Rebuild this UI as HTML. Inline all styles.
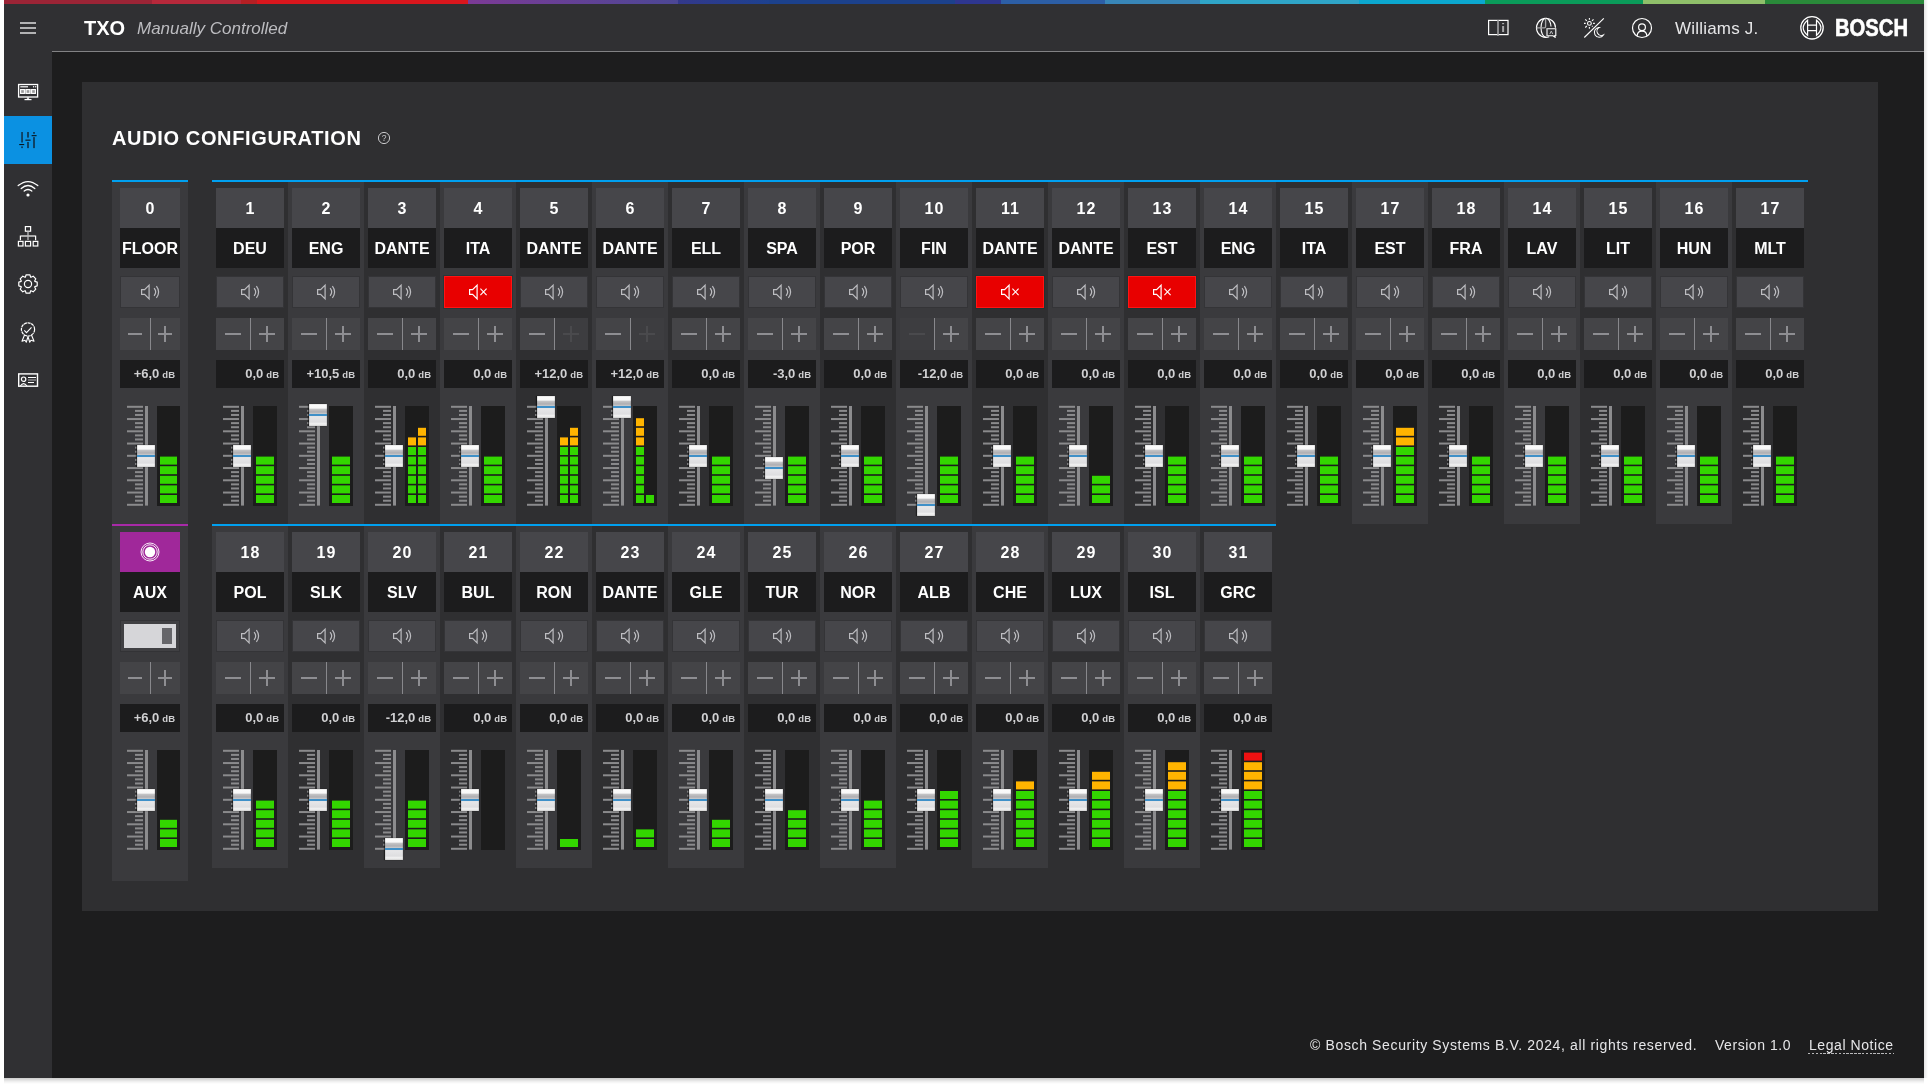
<!DOCTYPE html>
<html><head><meta charset="utf-8"><title>TXO Audio Configuration</title>
<style>
html,body{margin:0;padding:0;}
body{width:1928px;height:1084px;background:#fff;position:relative;overflow:hidden;font-family:"Liberation Sans", sans-serif;}
.app{position:absolute;left:4px;top:0;width:1920px;height:1078px;background:#1d1d1e;}
.abs{position:absolute;}
.num{position:absolute;height:40px;line-height:40px;text-align:center;color:#fff;font-weight:bold;font-size:16px;letter-spacing:1px;text-indent:1px;}
.nm{position:absolute;height:40px;line-height:40px;text-align:center;color:#fff;font-weight:bold;font-size:16px;}
.db{position:absolute;height:28px;line-height:28px;text-align:right;color:#d0d0d2;font-weight:bold;font-size:13px;}
.db span{font-size:9.5px;margin-left:3px;}
.knob{position:absolute;width:18px;height:22px;box-sizing:border-box;
background:linear-gradient(180deg,#dcdcdc 0px,#fbfbfb 1px,#f8f8f8 4px,#c2c2c4 5.5px,#aeaeb2 8px,#c4c4c6 9.5px,#e4e4e6 10px,#e2e2e4 12px,#e6e6e8 13px,#dedee0 18px,#f4f4f4 20px,#cfcfcf 22px);
box-shadow:inset 1px 0 0 rgba(0,0,0,0.08),inset -1px 0 0 rgba(0,0,0,0.08),-1px 0 1px rgba(0,0,0,0.5);}
.knob i{position:absolute;left:0;top:10px;width:18px;height:2px;background:#3f90c8;}
</style></head><body>
<svg width="0" height="0" style="position:absolute"><defs><g id="tk" fill="#8a8a8c"><rect x="0" y="1.800" width="16" height="2"/><rect x="8" y="5.883" width="8" height="2"/><rect x="8" y="9.966" width="8" height="2"/><rect x="0" y="14.049" width="16" height="2"/><rect x="8" y="18.132" width="8" height="2"/><rect x="8" y="22.215" width="8" height="2"/><rect x="0" y="26.298" width="16" height="2"/><rect x="8" y="30.381" width="8" height="2"/><rect x="8" y="34.464" width="8" height="2"/><rect x="0" y="38.547" width="16" height="2"/><rect x="8" y="42.630" width="8" height="2"/><rect x="8" y="46.713" width="8" height="2"/><rect x="0" y="50.796" width="16" height="2"/><rect x="8" y="54.879" width="8" height="2"/><rect x="8" y="58.962" width="8" height="2"/><rect x="0" y="63.045" width="16" height="2"/><rect x="8" y="67.128" width="8" height="2"/><rect x="8" y="71.211" width="8" height="2"/><rect x="0" y="75.294" width="16" height="2"/><rect x="8" y="79.377" width="8" height="2"/><rect x="8" y="83.460" width="8" height="2"/><rect x="0" y="87.543" width="16" height="2"/><rect x="8" y="91.626" width="8" height="2"/><rect x="8" y="95.709" width="8" height="2"/><rect x="0" y="99.792" width="16" height="2"/><rect x="18" y="2" width="3" height="99.6" fill="#8c8c8e"/></g></defs></svg><div class="app"></div><div style="position:absolute;left:1924px;top:0;width:4px;height:1078px;background:linear-gradient(90deg,rgba(0,0,0,0.1),rgba(0,0,0,0))"></div><div style="position:absolute;left:4px;top:1078px;width:1920px;height:6px;background:linear-gradient(180deg,rgba(0,0,0,0.2),rgba(0,0,0,0.06) 60%,rgba(0,0,0,0))"></div>
<div style="position:absolute;left:0;top:0;width:1928px;height:1084px;will-change:transform"><div style="position:absolute;left:4px;top:0px;width:148px;height:4px;background:#9b2436;"></div>
<div style="position:absolute;left:152px;top:0px;width:89px;height:4px;background:#b6283b;"></div>
<div style="position:absolute;left:241px;top:0px;width:16px;height:4px;background:#b41f24;"></div>
<div style="position:absolute;left:257px;top:0px;width:211px;height:4px;background:#d9161d;"></div>
<div style="position:absolute;left:468px;top:0px;width:210px;height:4px;background:linear-gradient(90deg,#7c3a96,#4c4795);"></div>
<div style="position:absolute;left:678px;top:0px;width:91px;height:4px;background:linear-gradient(90deg,#33388a,#1d4190);"></div>
<div style="position:absolute;left:769px;top:0px;width:186px;height:4px;background:#1c418c;"></div>
<div style="position:absolute;left:955px;top:0px;width:46px;height:4px;background:#2e3690;"></div>
<div style="position:absolute;left:1001px;top:0px;width:104px;height:4px;background:#2c5ea6;"></div>
<div style="position:absolute;left:1105px;top:0px;width:95px;height:4px;background:#3886b8;"></div>
<div style="position:absolute;left:1200px;top:0px;width:159px;height:4px;background:#2fa5c8;"></div>
<div style="position:absolute;left:1359px;top:0px;width:126px;height:4px;background:#0ba7cf;"></div>
<div style="position:absolute;left:1485px;top:0px;width:158px;height:4px;background:#0a9b5a;"></div>
<div style="position:absolute;left:1643px;top:0px;width:122px;height:4px;background:#8fbf6a;"></div>
<div style="position:absolute;left:1765px;top:0px;width:159px;height:4px;background:#2a8a3a;"></div>
<div style="position:absolute;left:4px;top:4px;width:1920px;height:48px;background:#303033;"></div>
<div style="position:absolute;left:52px;top:51px;width:1872px;height:1px;background:#828284;"></div>
<div style="position:absolute;left:4px;top:52px;width:48px;height:1026px;background:#303033;"></div>
<div style="position:absolute;left:52px;top:52px;width:1872px;height:1026px;background:#1d1d1e;"></div>
<div style="position:absolute;left:82px;top:82px;width:1796px;height:829px;background:#2f2f31;"></div>
<div style="position:absolute;left:112px;top:180px;width:76px;height:2px;background:#00a0f0;"></div>
<div style="position:absolute;left:212px;top:180px;width:1596px;height:2px;background:#00a0f0;"></div>
<div style="position:absolute;left:112px;top:524px;width:76px;height:2px;background:#a82aa8;"></div>
<div style="position:absolute;left:212px;top:524px;width:1064px;height:2px;background:#00a0f0;"></div>
<div style="position:absolute;left:112px;top:182px;width:76px;height:342px;background:#3a3a3d;"></div>
<div style="position:absolute;left:120px;top:188px;width:60px;height:40px;background:#46464a;"></div>
<div class="num" style="left:120px;top:189px;width:60px">0</div>
<div style="position:absolute;left:120px;top:228px;width:60px;height:40px;background:#1c1c1d;"></div>
<div class="nm" style="left:120px;top:229px;width:60px">FLOOR</div>
<div style="position:absolute;left:120px;top:276px;width:60px;height:32px;background:#46464a;box-sizing:border-box;border:1px solid #343437"></div>
<svg width="24" height="24" viewBox="0 0 24 24" style="position:absolute;left:138px;top:280px"><path d="M3.6 9.6H6.6L11.1 5.1V18.9L6.6 14.4H3.6Z" fill="none" stroke="#bdbdc1" stroke-width="1.2" stroke-linejoin="miter"/><path d="M16.1 8.2Q19.3 12 16.1 15.8" fill="none" stroke="#bdbdc1" stroke-width="1.2"/><path d="M18.4 6.1Q22.8 12 18.4 17.9" fill="none" stroke="#bdbdc1" stroke-width="1.2"/></svg>
<div style="position:absolute;left:120px;top:318px;width:30px;height:32px;background:#444447;"></div>
<div style="position:absolute;left:150px;top:318px;width:30px;height:32px;background:#444447;"></div>
<div style="position:absolute;left:150px;top:318px;width:1px;height:32px;background:#88888c;"></div>
<div style="position:absolute;left:128px;top:333px;width:14px;height:2px;background:#8e8e92;"></div>
<div style="position:absolute;left:158px;top:333px;width:14px;height:2px;background:#8e8e92;"></div>
<div style="position:absolute;left:164px;top:326px;width:2px;height:16px;background:#8e8e92;"></div>
<div style="position:absolute;left:120px;top:360px;width:60px;height:28px;background:#1c1c1d;"></div>
<div class="db" style="left:120px;top:360px;width:55px">+6,0<span>dB</span></div>
<svg width="53" height="104" viewBox="0 0 53 104" style="position:absolute;left:127px;top:404px"><use href="#tk"/><rect x="30" y="2" width="23" height="100" fill="#1c1c1c"/><rect x="33" y="91.00" width="17" height="8" fill="#33d600"/><rect x="33" y="81.40" width="17" height="8" fill="#33d600"/><rect x="33" y="71.80" width="17" height="8" fill="#33d600"/><rect x="33" y="62.20" width="17" height="8" fill="#33d600"/><rect x="33" y="52.60" width="17" height="8" fill="#33d600"/></svg>
<div class="knob" style="left:137px;top:445px"><i></i></div>
<div style="position:absolute;left:216px;top:188px;width:68px;height:40px;background:#46464a;"></div>
<div class="num" style="left:216px;top:189px;width:68px">1</div>
<div style="position:absolute;left:216px;top:228px;width:68px;height:40px;background:#1c1c1d;"></div>
<div class="nm" style="left:216px;top:229px;width:68px">DEU</div>
<div style="position:absolute;left:216px;top:276px;width:68px;height:32px;background:#46464a;box-sizing:border-box;border:1px solid #343437"></div>
<svg width="24" height="24" viewBox="0 0 24 24" style="position:absolute;left:238px;top:280px"><path d="M3.6 9.6H6.6L11.1 5.1V18.9L6.6 14.4H3.6Z" fill="none" stroke="#bdbdc1" stroke-width="1.2" stroke-linejoin="miter"/><path d="M16.1 8.2Q19.3 12 16.1 15.8" fill="none" stroke="#bdbdc1" stroke-width="1.2"/><path d="M18.4 6.1Q22.8 12 18.4 17.9" fill="none" stroke="#bdbdc1" stroke-width="1.2"/></svg>
<div style="position:absolute;left:216px;top:318px;width:34px;height:32px;background:#444447;"></div>
<div style="position:absolute;left:250px;top:318px;width:34px;height:32px;background:#444447;"></div>
<div style="position:absolute;left:250px;top:318px;width:1px;height:32px;background:#88888c;"></div>
<div style="position:absolute;left:225px;top:333px;width:16px;height:2px;background:#8e8e92;"></div>
<div style="position:absolute;left:259px;top:333px;width:16px;height:2px;background:#8e8e92;"></div>
<div style="position:absolute;left:266px;top:326px;width:2px;height:16px;background:#8e8e92;"></div>
<div style="position:absolute;left:216px;top:360px;width:68px;height:28px;background:#1c1c1d;"></div>
<div class="db" style="left:216px;top:360px;width:63px">0,0<span>dB</span></div>
<svg width="54" height="104" viewBox="0 0 54 104" style="position:absolute;left:223px;top:404px"><use href="#tk"/><rect x="30" y="2" width="24" height="100" fill="#1c1c1c"/><rect x="33" y="91.00" width="18" height="8" fill="#33d600"/><rect x="33" y="81.40" width="18" height="8" fill="#33d600"/><rect x="33" y="71.80" width="18" height="8" fill="#33d600"/><rect x="33" y="62.20" width="18" height="8" fill="#33d600"/><rect x="33" y="52.60" width="18" height="8" fill="#33d600"/></svg>
<div class="knob" style="left:233px;top:445px"><i></i></div>
<div style="position:absolute;left:288px;top:182px;width:76px;height:342px;background:#3a3a3d;"></div>
<div style="position:absolute;left:292px;top:188px;width:68px;height:40px;background:#46464a;"></div>
<div class="num" style="left:292px;top:189px;width:68px">2</div>
<div style="position:absolute;left:292px;top:228px;width:68px;height:40px;background:#1c1c1d;"></div>
<div class="nm" style="left:292px;top:229px;width:68px">ENG</div>
<div style="position:absolute;left:292px;top:276px;width:68px;height:32px;background:#46464a;box-sizing:border-box;border:1px solid #343437"></div>
<svg width="24" height="24" viewBox="0 0 24 24" style="position:absolute;left:314px;top:280px"><path d="M3.6 9.6H6.6L11.1 5.1V18.9L6.6 14.4H3.6Z" fill="none" stroke="#bdbdc1" stroke-width="1.2" stroke-linejoin="miter"/><path d="M16.1 8.2Q19.3 12 16.1 15.8" fill="none" stroke="#bdbdc1" stroke-width="1.2"/><path d="M18.4 6.1Q22.8 12 18.4 17.9" fill="none" stroke="#bdbdc1" stroke-width="1.2"/></svg>
<div style="position:absolute;left:292px;top:318px;width:34px;height:32px;background:#444447;"></div>
<div style="position:absolute;left:326px;top:318px;width:34px;height:32px;background:#444447;"></div>
<div style="position:absolute;left:326px;top:318px;width:1px;height:32px;background:#88888c;"></div>
<div style="position:absolute;left:301px;top:333px;width:16px;height:2px;background:#8e8e92;"></div>
<div style="position:absolute;left:335px;top:333px;width:16px;height:2px;background:#8e8e92;"></div>
<div style="position:absolute;left:342px;top:326px;width:2px;height:16px;background:#8e8e92;"></div>
<div style="position:absolute;left:292px;top:360px;width:68px;height:28px;background:#1c1c1d;"></div>
<div class="db" style="left:292px;top:360px;width:63px">+10,5<span>dB</span></div>
<svg width="54" height="104" viewBox="0 0 54 104" style="position:absolute;left:299px;top:404px"><use href="#tk"/><rect x="30" y="2" width="24" height="100" fill="#1c1c1c"/><rect x="33" y="91.00" width="18" height="8" fill="#33d600"/><rect x="33" y="81.40" width="18" height="8" fill="#33d600"/><rect x="33" y="71.80" width="18" height="8" fill="#33d600"/><rect x="33" y="62.20" width="18" height="8" fill="#33d600"/><rect x="33" y="52.60" width="18" height="8" fill="#33d600"/></svg>
<div class="knob" style="left:309px;top:404px"><i></i></div>
<div style="position:absolute;left:368px;top:188px;width:68px;height:40px;background:#46464a;"></div>
<div class="num" style="left:368px;top:189px;width:68px">3</div>
<div style="position:absolute;left:368px;top:228px;width:68px;height:40px;background:#1c1c1d;"></div>
<div class="nm" style="left:368px;top:229px;width:68px">DANTE</div>
<div style="position:absolute;left:368px;top:276px;width:68px;height:32px;background:#46464a;box-sizing:border-box;border:1px solid #343437"></div>
<svg width="24" height="24" viewBox="0 0 24 24" style="position:absolute;left:390px;top:280px"><path d="M3.6 9.6H6.6L11.1 5.1V18.9L6.6 14.4H3.6Z" fill="none" stroke="#bdbdc1" stroke-width="1.2" stroke-linejoin="miter"/><path d="M16.1 8.2Q19.3 12 16.1 15.8" fill="none" stroke="#bdbdc1" stroke-width="1.2"/><path d="M18.4 6.1Q22.8 12 18.4 17.9" fill="none" stroke="#bdbdc1" stroke-width="1.2"/></svg>
<div style="position:absolute;left:368px;top:318px;width:34px;height:32px;background:#444447;"></div>
<div style="position:absolute;left:402px;top:318px;width:34px;height:32px;background:#444447;"></div>
<div style="position:absolute;left:402px;top:318px;width:1px;height:32px;background:#88888c;"></div>
<div style="position:absolute;left:377px;top:333px;width:16px;height:2px;background:#8e8e92;"></div>
<div style="position:absolute;left:411px;top:333px;width:16px;height:2px;background:#8e8e92;"></div>
<div style="position:absolute;left:418px;top:326px;width:2px;height:16px;background:#8e8e92;"></div>
<div style="position:absolute;left:368px;top:360px;width:68px;height:28px;background:#1c1c1d;"></div>
<div class="db" style="left:368px;top:360px;width:63px">0,0<span>dB</span></div>
<svg width="54" height="104" viewBox="0 0 54 104" style="position:absolute;left:375px;top:404px"><use href="#tk"/><rect x="30" y="2" width="24" height="100" fill="#1c1c1c"/><rect x="33" y="91.00" width="8" height="8" fill="#33d600"/><rect x="33" y="81.40" width="8" height="8" fill="#33d600"/><rect x="33" y="71.80" width="8" height="8" fill="#33d600"/><rect x="33" y="62.20" width="8" height="8" fill="#33d600"/><rect x="33" y="52.60" width="8" height="8" fill="#33d600"/><rect x="33" y="43.00" width="8" height="8" fill="#33d600"/><rect x="33" y="33.40" width="8" height="8" fill="#ffb400"/><rect x="43" y="91.00" width="8" height="8" fill="#33d600"/><rect x="43" y="81.40" width="8" height="8" fill="#33d600"/><rect x="43" y="71.80" width="8" height="8" fill="#33d600"/><rect x="43" y="62.20" width="8" height="8" fill="#33d600"/><rect x="43" y="52.60" width="8" height="8" fill="#33d600"/><rect x="43" y="43.00" width="8" height="8" fill="#33d600"/><rect x="43" y="33.40" width="8" height="8" fill="#ffb400"/><rect x="43" y="23.80" width="8" height="8" fill="#ffb400"/></svg>
<div class="knob" style="left:385px;top:445px"><i></i></div>
<div style="position:absolute;left:440px;top:182px;width:76px;height:342px;background:#3a3a3d;"></div>
<div style="position:absolute;left:444px;top:188px;width:68px;height:40px;background:#46464a;"></div>
<div class="num" style="left:444px;top:189px;width:68px">4</div>
<div style="position:absolute;left:444px;top:228px;width:68px;height:40px;background:#1c1c1d;"></div>
<div class="nm" style="left:444px;top:229px;width:68px">ITA</div>
<div style="position:absolute;left:444px;top:276px;width:68px;height:32px;background:#e80000;box-sizing:border-box;border:1px solid #ff1414;box-shadow:0 0 0 1px rgba(20,50,50,0.45)"></div>
<svg width="24" height="24" viewBox="0 0 24 24" style="position:absolute;left:466px;top:280px"><path d="M3.6 9.6H6.6L11.1 5.1V18.9L6.6 14.4H3.6Z" fill="none" stroke="#fff" stroke-width="1.2"/><path d="M14.4 8.7L20.6 15.1M20.6 8.7L14.4 15.1" fill="none" stroke="#fff" stroke-width="1.1"/></svg>
<div style="position:absolute;left:444px;top:318px;width:34px;height:32px;background:#444447;"></div>
<div style="position:absolute;left:478px;top:318px;width:34px;height:32px;background:#444447;"></div>
<div style="position:absolute;left:478px;top:318px;width:1px;height:32px;background:#88888c;"></div>
<div style="position:absolute;left:453px;top:333px;width:16px;height:2px;background:#8e8e92;"></div>
<div style="position:absolute;left:487px;top:333px;width:16px;height:2px;background:#8e8e92;"></div>
<div style="position:absolute;left:494px;top:326px;width:2px;height:16px;background:#8e8e92;"></div>
<div style="position:absolute;left:444px;top:360px;width:68px;height:28px;background:#1c1c1d;"></div>
<div class="db" style="left:444px;top:360px;width:63px">0,0<span>dB</span></div>
<svg width="54" height="104" viewBox="0 0 54 104" style="position:absolute;left:451px;top:404px"><use href="#tk"/><rect x="30" y="2" width="24" height="100" fill="#1c1c1c"/><rect x="33" y="91.00" width="18" height="8" fill="#33d600"/><rect x="33" y="81.40" width="18" height="8" fill="#33d600"/><rect x="33" y="71.80" width="18" height="8" fill="#33d600"/><rect x="33" y="62.20" width="18" height="8" fill="#33d600"/><rect x="33" y="52.60" width="18" height="8" fill="#33d600"/></svg>
<div class="knob" style="left:461px;top:445px"><i></i></div>
<div style="position:absolute;left:520px;top:188px;width:68px;height:40px;background:#46464a;"></div>
<div class="num" style="left:520px;top:189px;width:68px">5</div>
<div style="position:absolute;left:520px;top:228px;width:68px;height:40px;background:#1c1c1d;"></div>
<div class="nm" style="left:520px;top:229px;width:68px">DANTE</div>
<div style="position:absolute;left:520px;top:276px;width:68px;height:32px;background:#46464a;box-sizing:border-box;border:1px solid #343437"></div>
<svg width="24" height="24" viewBox="0 0 24 24" style="position:absolute;left:542px;top:280px"><path d="M3.6 9.6H6.6L11.1 5.1V18.9L6.6 14.4H3.6Z" fill="none" stroke="#bdbdc1" stroke-width="1.2" stroke-linejoin="miter"/><path d="M16.1 8.2Q19.3 12 16.1 15.8" fill="none" stroke="#bdbdc1" stroke-width="1.2"/><path d="M18.4 6.1Q22.8 12 18.4 17.9" fill="none" stroke="#bdbdc1" stroke-width="1.2"/></svg>
<div style="position:absolute;left:520px;top:318px;width:34px;height:32px;background:#444447;"></div>
<div style="position:absolute;left:554px;top:318px;width:34px;height:32px;background:#3d3d40;"></div>
<div style="position:absolute;left:554px;top:318px;width:1px;height:32px;background:#88888c;"></div>
<div style="position:absolute;left:529px;top:333px;width:16px;height:2px;background:#8e8e92;"></div>
<div style="position:absolute;left:563px;top:333px;width:16px;height:2px;background:#4a4a4d;"></div>
<div style="position:absolute;left:570px;top:326px;width:2px;height:16px;background:#4a4a4d;"></div>
<div style="position:absolute;left:520px;top:360px;width:68px;height:28px;background:#1c1c1d;"></div>
<div class="db" style="left:520px;top:360px;width:63px">+12,0<span>dB</span></div>
<svg width="54" height="104" viewBox="0 0 54 104" style="position:absolute;left:527px;top:404px"><use href="#tk"/><rect x="30" y="2" width="24" height="100" fill="#1c1c1c"/><rect x="33" y="91.00" width="8" height="8" fill="#33d600"/><rect x="33" y="81.40" width="8" height="8" fill="#33d600"/><rect x="33" y="71.80" width="8" height="8" fill="#33d600"/><rect x="33" y="62.20" width="8" height="8" fill="#33d600"/><rect x="33" y="52.60" width="8" height="8" fill="#33d600"/><rect x="33" y="43.00" width="8" height="8" fill="#33d600"/><rect x="33" y="33.40" width="8" height="8" fill="#ffb400"/><rect x="43" y="91.00" width="8" height="8" fill="#33d600"/><rect x="43" y="81.40" width="8" height="8" fill="#33d600"/><rect x="43" y="71.80" width="8" height="8" fill="#33d600"/><rect x="43" y="62.20" width="8" height="8" fill="#33d600"/><rect x="43" y="52.60" width="8" height="8" fill="#33d600"/><rect x="43" y="43.00" width="8" height="8" fill="#33d600"/><rect x="43" y="33.40" width="8" height="8" fill="#ffb400"/><rect x="43" y="23.80" width="8" height="8" fill="#ffb400"/></svg>
<div class="knob" style="left:537px;top:396px"><i></i></div>
<div style="position:absolute;left:592px;top:182px;width:76px;height:342px;background:#3a3a3d;"></div>
<div style="position:absolute;left:596px;top:188px;width:68px;height:40px;background:#46464a;"></div>
<div class="num" style="left:596px;top:189px;width:68px">6</div>
<div style="position:absolute;left:596px;top:228px;width:68px;height:40px;background:#1c1c1d;"></div>
<div class="nm" style="left:596px;top:229px;width:68px">DANTE</div>
<div style="position:absolute;left:596px;top:276px;width:68px;height:32px;background:#46464a;box-sizing:border-box;border:1px solid #343437"></div>
<svg width="24" height="24" viewBox="0 0 24 24" style="position:absolute;left:618px;top:280px"><path d="M3.6 9.6H6.6L11.1 5.1V18.9L6.6 14.4H3.6Z" fill="none" stroke="#bdbdc1" stroke-width="1.2" stroke-linejoin="miter"/><path d="M16.1 8.2Q19.3 12 16.1 15.8" fill="none" stroke="#bdbdc1" stroke-width="1.2"/><path d="M18.4 6.1Q22.8 12 18.4 17.9" fill="none" stroke="#bdbdc1" stroke-width="1.2"/></svg>
<div style="position:absolute;left:596px;top:318px;width:34px;height:32px;background:#444447;"></div>
<div style="position:absolute;left:630px;top:318px;width:34px;height:32px;background:#3d3d40;"></div>
<div style="position:absolute;left:630px;top:318px;width:1px;height:32px;background:#88888c;"></div>
<div style="position:absolute;left:605px;top:333px;width:16px;height:2px;background:#8e8e92;"></div>
<div style="position:absolute;left:639px;top:333px;width:16px;height:2px;background:#4a4a4d;"></div>
<div style="position:absolute;left:646px;top:326px;width:2px;height:16px;background:#4a4a4d;"></div>
<div style="position:absolute;left:596px;top:360px;width:68px;height:28px;background:#1c1c1d;"></div>
<div class="db" style="left:596px;top:360px;width:63px">+12,0<span>dB</span></div>
<svg width="54" height="104" viewBox="0 0 54 104" style="position:absolute;left:603px;top:404px"><use href="#tk"/><rect x="30" y="2" width="24" height="100" fill="#1c1c1c"/><rect x="33" y="91.00" width="8" height="8" fill="#33d600"/><rect x="33" y="81.40" width="8" height="8" fill="#33d600"/><rect x="33" y="71.80" width="8" height="8" fill="#33d600"/><rect x="33" y="62.20" width="8" height="8" fill="#33d600"/><rect x="33" y="52.60" width="8" height="8" fill="#33d600"/><rect x="33" y="43.00" width="8" height="8" fill="#33d600"/><rect x="33" y="33.40" width="8" height="8" fill="#ffb400"/><rect x="33" y="23.80" width="8" height="8" fill="#ffb400"/><rect x="33" y="14.20" width="8" height="8" fill="#ffb400"/><rect x="43" y="91.00" width="8" height="8" fill="#33d600"/></svg>
<div class="knob" style="left:613px;top:396px"><i></i></div>
<div style="position:absolute;left:672px;top:188px;width:68px;height:40px;background:#46464a;"></div>
<div class="num" style="left:672px;top:189px;width:68px">7</div>
<div style="position:absolute;left:672px;top:228px;width:68px;height:40px;background:#1c1c1d;"></div>
<div class="nm" style="left:672px;top:229px;width:68px">ELL</div>
<div style="position:absolute;left:672px;top:276px;width:68px;height:32px;background:#46464a;box-sizing:border-box;border:1px solid #343437"></div>
<svg width="24" height="24" viewBox="0 0 24 24" style="position:absolute;left:694px;top:280px"><path d="M3.6 9.6H6.6L11.1 5.1V18.9L6.6 14.4H3.6Z" fill="none" stroke="#bdbdc1" stroke-width="1.2" stroke-linejoin="miter"/><path d="M16.1 8.2Q19.3 12 16.1 15.8" fill="none" stroke="#bdbdc1" stroke-width="1.2"/><path d="M18.4 6.1Q22.8 12 18.4 17.9" fill="none" stroke="#bdbdc1" stroke-width="1.2"/></svg>
<div style="position:absolute;left:672px;top:318px;width:34px;height:32px;background:#444447;"></div>
<div style="position:absolute;left:706px;top:318px;width:34px;height:32px;background:#444447;"></div>
<div style="position:absolute;left:706px;top:318px;width:1px;height:32px;background:#88888c;"></div>
<div style="position:absolute;left:681px;top:333px;width:16px;height:2px;background:#8e8e92;"></div>
<div style="position:absolute;left:715px;top:333px;width:16px;height:2px;background:#8e8e92;"></div>
<div style="position:absolute;left:722px;top:326px;width:2px;height:16px;background:#8e8e92;"></div>
<div style="position:absolute;left:672px;top:360px;width:68px;height:28px;background:#1c1c1d;"></div>
<div class="db" style="left:672px;top:360px;width:63px">0,0<span>dB</span></div>
<svg width="54" height="104" viewBox="0 0 54 104" style="position:absolute;left:679px;top:404px"><use href="#tk"/><rect x="30" y="2" width="24" height="100" fill="#1c1c1c"/><rect x="33" y="91.00" width="18" height="8" fill="#33d600"/><rect x="33" y="81.40" width="18" height="8" fill="#33d600"/><rect x="33" y="71.80" width="18" height="8" fill="#33d600"/><rect x="33" y="62.20" width="18" height="8" fill="#33d600"/><rect x="33" y="52.60" width="18" height="8" fill="#33d600"/></svg>
<div class="knob" style="left:689px;top:445px"><i></i></div>
<div style="position:absolute;left:744px;top:182px;width:76px;height:342px;background:#3a3a3d;"></div>
<div style="position:absolute;left:748px;top:188px;width:68px;height:40px;background:#46464a;"></div>
<div class="num" style="left:748px;top:189px;width:68px">8</div>
<div style="position:absolute;left:748px;top:228px;width:68px;height:40px;background:#1c1c1d;"></div>
<div class="nm" style="left:748px;top:229px;width:68px">SPA</div>
<div style="position:absolute;left:748px;top:276px;width:68px;height:32px;background:#46464a;box-sizing:border-box;border:1px solid #343437"></div>
<svg width="24" height="24" viewBox="0 0 24 24" style="position:absolute;left:770px;top:280px"><path d="M3.6 9.6H6.6L11.1 5.1V18.9L6.6 14.4H3.6Z" fill="none" stroke="#bdbdc1" stroke-width="1.2" stroke-linejoin="miter"/><path d="M16.1 8.2Q19.3 12 16.1 15.8" fill="none" stroke="#bdbdc1" stroke-width="1.2"/><path d="M18.4 6.1Q22.8 12 18.4 17.9" fill="none" stroke="#bdbdc1" stroke-width="1.2"/></svg>
<div style="position:absolute;left:748px;top:318px;width:34px;height:32px;background:#444447;"></div>
<div style="position:absolute;left:782px;top:318px;width:34px;height:32px;background:#444447;"></div>
<div style="position:absolute;left:782px;top:318px;width:1px;height:32px;background:#88888c;"></div>
<div style="position:absolute;left:757px;top:333px;width:16px;height:2px;background:#8e8e92;"></div>
<div style="position:absolute;left:791px;top:333px;width:16px;height:2px;background:#8e8e92;"></div>
<div style="position:absolute;left:798px;top:326px;width:2px;height:16px;background:#8e8e92;"></div>
<div style="position:absolute;left:748px;top:360px;width:68px;height:28px;background:#1c1c1d;"></div>
<div class="db" style="left:748px;top:360px;width:63px">-3,0<span>dB</span></div>
<svg width="54" height="104" viewBox="0 0 54 104" style="position:absolute;left:755px;top:404px"><use href="#tk"/><rect x="30" y="2" width="24" height="100" fill="#1c1c1c"/><rect x="33" y="91.00" width="18" height="8" fill="#33d600"/><rect x="33" y="81.40" width="18" height="8" fill="#33d600"/><rect x="33" y="71.80" width="18" height="8" fill="#33d600"/><rect x="33" y="62.20" width="18" height="8" fill="#33d600"/><rect x="33" y="52.60" width="18" height="8" fill="#33d600"/></svg>
<div class="knob" style="left:765px;top:457px"><i></i></div>
<div style="position:absolute;left:824px;top:188px;width:68px;height:40px;background:#46464a;"></div>
<div class="num" style="left:824px;top:189px;width:68px">9</div>
<div style="position:absolute;left:824px;top:228px;width:68px;height:40px;background:#1c1c1d;"></div>
<div class="nm" style="left:824px;top:229px;width:68px">POR</div>
<div style="position:absolute;left:824px;top:276px;width:68px;height:32px;background:#46464a;box-sizing:border-box;border:1px solid #343437"></div>
<svg width="24" height="24" viewBox="0 0 24 24" style="position:absolute;left:846px;top:280px"><path d="M3.6 9.6H6.6L11.1 5.1V18.9L6.6 14.4H3.6Z" fill="none" stroke="#bdbdc1" stroke-width="1.2" stroke-linejoin="miter"/><path d="M16.1 8.2Q19.3 12 16.1 15.8" fill="none" stroke="#bdbdc1" stroke-width="1.2"/><path d="M18.4 6.1Q22.8 12 18.4 17.9" fill="none" stroke="#bdbdc1" stroke-width="1.2"/></svg>
<div style="position:absolute;left:824px;top:318px;width:34px;height:32px;background:#444447;"></div>
<div style="position:absolute;left:858px;top:318px;width:34px;height:32px;background:#444447;"></div>
<div style="position:absolute;left:858px;top:318px;width:1px;height:32px;background:#88888c;"></div>
<div style="position:absolute;left:833px;top:333px;width:16px;height:2px;background:#8e8e92;"></div>
<div style="position:absolute;left:867px;top:333px;width:16px;height:2px;background:#8e8e92;"></div>
<div style="position:absolute;left:874px;top:326px;width:2px;height:16px;background:#8e8e92;"></div>
<div style="position:absolute;left:824px;top:360px;width:68px;height:28px;background:#1c1c1d;"></div>
<div class="db" style="left:824px;top:360px;width:63px">0,0<span>dB</span></div>
<svg width="54" height="104" viewBox="0 0 54 104" style="position:absolute;left:831px;top:404px"><use href="#tk"/><rect x="30" y="2" width="24" height="100" fill="#1c1c1c"/><rect x="33" y="91.00" width="18" height="8" fill="#33d600"/><rect x="33" y="81.40" width="18" height="8" fill="#33d600"/><rect x="33" y="71.80" width="18" height="8" fill="#33d600"/><rect x="33" y="62.20" width="18" height="8" fill="#33d600"/><rect x="33" y="52.60" width="18" height="8" fill="#33d600"/></svg>
<div class="knob" style="left:841px;top:445px"><i></i></div>
<div style="position:absolute;left:896px;top:182px;width:76px;height:342px;background:#3a3a3d;"></div>
<div style="position:absolute;left:900px;top:188px;width:68px;height:40px;background:#46464a;"></div>
<div class="num" style="left:900px;top:189px;width:68px">10</div>
<div style="position:absolute;left:900px;top:228px;width:68px;height:40px;background:#1c1c1d;"></div>
<div class="nm" style="left:900px;top:229px;width:68px">FIN</div>
<div style="position:absolute;left:900px;top:276px;width:68px;height:32px;background:#46464a;box-sizing:border-box;border:1px solid #343437"></div>
<svg width="24" height="24" viewBox="0 0 24 24" style="position:absolute;left:922px;top:280px"><path d="M3.6 9.6H6.6L11.1 5.1V18.9L6.6 14.4H3.6Z" fill="none" stroke="#bdbdc1" stroke-width="1.2" stroke-linejoin="miter"/><path d="M16.1 8.2Q19.3 12 16.1 15.8" fill="none" stroke="#bdbdc1" stroke-width="1.2"/><path d="M18.4 6.1Q22.8 12 18.4 17.9" fill="none" stroke="#bdbdc1" stroke-width="1.2"/></svg>
<div style="position:absolute;left:900px;top:318px;width:34px;height:32px;background:#3d3d40;"></div>
<div style="position:absolute;left:934px;top:318px;width:34px;height:32px;background:#444447;"></div>
<div style="position:absolute;left:934px;top:318px;width:1px;height:32px;background:#88888c;"></div>
<div style="position:absolute;left:909px;top:333px;width:16px;height:2px;background:#4a4a4d;"></div>
<div style="position:absolute;left:943px;top:333px;width:16px;height:2px;background:#8e8e92;"></div>
<div style="position:absolute;left:950px;top:326px;width:2px;height:16px;background:#8e8e92;"></div>
<div style="position:absolute;left:900px;top:360px;width:68px;height:28px;background:#1c1c1d;"></div>
<div class="db" style="left:900px;top:360px;width:63px">-12,0<span>dB</span></div>
<svg width="54" height="104" viewBox="0 0 54 104" style="position:absolute;left:907px;top:404px"><use href="#tk"/><rect x="30" y="2" width="24" height="100" fill="#1c1c1c"/><rect x="33" y="91.00" width="18" height="8" fill="#33d600"/><rect x="33" y="81.40" width="18" height="8" fill="#33d600"/><rect x="33" y="71.80" width="18" height="8" fill="#33d600"/><rect x="33" y="62.20" width="18" height="8" fill="#33d600"/><rect x="33" y="52.60" width="18" height="8" fill="#33d600"/></svg>
<div class="knob" style="left:917px;top:494px"><i></i></div>
<div style="position:absolute;left:976px;top:188px;width:68px;height:40px;background:#46464a;"></div>
<div class="num" style="left:976px;top:189px;width:68px">11</div>
<div style="position:absolute;left:976px;top:228px;width:68px;height:40px;background:#1c1c1d;"></div>
<div class="nm" style="left:976px;top:229px;width:68px">DANTE</div>
<div style="position:absolute;left:976px;top:276px;width:68px;height:32px;background:#e80000;box-sizing:border-box;border:1px solid #ff1414;box-shadow:0 0 0 1px rgba(20,50,50,0.45)"></div>
<svg width="24" height="24" viewBox="0 0 24 24" style="position:absolute;left:998px;top:280px"><path d="M3.6 9.6H6.6L11.1 5.1V18.9L6.6 14.4H3.6Z" fill="none" stroke="#fff" stroke-width="1.2"/><path d="M14.4 8.7L20.6 15.1M20.6 8.7L14.4 15.1" fill="none" stroke="#fff" stroke-width="1.1"/></svg>
<div style="position:absolute;left:976px;top:318px;width:34px;height:32px;background:#444447;"></div>
<div style="position:absolute;left:1010px;top:318px;width:34px;height:32px;background:#444447;"></div>
<div style="position:absolute;left:1010px;top:318px;width:1px;height:32px;background:#88888c;"></div>
<div style="position:absolute;left:985px;top:333px;width:16px;height:2px;background:#8e8e92;"></div>
<div style="position:absolute;left:1019px;top:333px;width:16px;height:2px;background:#8e8e92;"></div>
<div style="position:absolute;left:1026px;top:326px;width:2px;height:16px;background:#8e8e92;"></div>
<div style="position:absolute;left:976px;top:360px;width:68px;height:28px;background:#1c1c1d;"></div>
<div class="db" style="left:976px;top:360px;width:63px">0,0<span>dB</span></div>
<svg width="54" height="104" viewBox="0 0 54 104" style="position:absolute;left:983px;top:404px"><use href="#tk"/><rect x="30" y="2" width="24" height="100" fill="#1c1c1c"/><rect x="33" y="91.00" width="18" height="8" fill="#33d600"/><rect x="33" y="81.40" width="18" height="8" fill="#33d600"/><rect x="33" y="71.80" width="18" height="8" fill="#33d600"/><rect x="33" y="62.20" width="18" height="8" fill="#33d600"/><rect x="33" y="52.60" width="18" height="8" fill="#33d600"/></svg>
<div class="knob" style="left:993px;top:445px"><i></i></div>
<div style="position:absolute;left:1048px;top:182px;width:76px;height:342px;background:#3a3a3d;"></div>
<div style="position:absolute;left:1052px;top:188px;width:68px;height:40px;background:#46464a;"></div>
<div class="num" style="left:1052px;top:189px;width:68px">12</div>
<div style="position:absolute;left:1052px;top:228px;width:68px;height:40px;background:#1c1c1d;"></div>
<div class="nm" style="left:1052px;top:229px;width:68px">DANTE</div>
<div style="position:absolute;left:1052px;top:276px;width:68px;height:32px;background:#46464a;box-sizing:border-box;border:1px solid #343437"></div>
<svg width="24" height="24" viewBox="0 0 24 24" style="position:absolute;left:1074px;top:280px"><path d="M3.6 9.6H6.6L11.1 5.1V18.9L6.6 14.4H3.6Z" fill="none" stroke="#bdbdc1" stroke-width="1.2" stroke-linejoin="miter"/><path d="M16.1 8.2Q19.3 12 16.1 15.8" fill="none" stroke="#bdbdc1" stroke-width="1.2"/><path d="M18.4 6.1Q22.8 12 18.4 17.9" fill="none" stroke="#bdbdc1" stroke-width="1.2"/></svg>
<div style="position:absolute;left:1052px;top:318px;width:34px;height:32px;background:#444447;"></div>
<div style="position:absolute;left:1086px;top:318px;width:34px;height:32px;background:#444447;"></div>
<div style="position:absolute;left:1086px;top:318px;width:1px;height:32px;background:#88888c;"></div>
<div style="position:absolute;left:1061px;top:333px;width:16px;height:2px;background:#8e8e92;"></div>
<div style="position:absolute;left:1095px;top:333px;width:16px;height:2px;background:#8e8e92;"></div>
<div style="position:absolute;left:1102px;top:326px;width:2px;height:16px;background:#8e8e92;"></div>
<div style="position:absolute;left:1052px;top:360px;width:68px;height:28px;background:#1c1c1d;"></div>
<div class="db" style="left:1052px;top:360px;width:63px">0,0<span>dB</span></div>
<svg width="54" height="104" viewBox="0 0 54 104" style="position:absolute;left:1059px;top:404px"><use href="#tk"/><rect x="30" y="2" width="24" height="100" fill="#1c1c1c"/><rect x="33" y="91.00" width="18" height="8" fill="#33d600"/><rect x="33" y="81.40" width="18" height="8" fill="#33d600"/><rect x="33" y="71.80" width="18" height="8" fill="#33d600"/></svg>
<div class="knob" style="left:1069px;top:445px"><i></i></div>
<div style="position:absolute;left:1128px;top:188px;width:68px;height:40px;background:#46464a;"></div>
<div class="num" style="left:1128px;top:189px;width:68px">13</div>
<div style="position:absolute;left:1128px;top:228px;width:68px;height:40px;background:#1c1c1d;"></div>
<div class="nm" style="left:1128px;top:229px;width:68px">EST</div>
<div style="position:absolute;left:1128px;top:276px;width:68px;height:32px;background:#e80000;box-sizing:border-box;border:1px solid #ff1414;box-shadow:0 0 0 1px rgba(20,50,50,0.45)"></div>
<svg width="24" height="24" viewBox="0 0 24 24" style="position:absolute;left:1150px;top:280px"><path d="M3.6 9.6H6.6L11.1 5.1V18.9L6.6 14.4H3.6Z" fill="none" stroke="#fff" stroke-width="1.2"/><path d="M14.4 8.7L20.6 15.1M20.6 8.7L14.4 15.1" fill="none" stroke="#fff" stroke-width="1.1"/></svg>
<div style="position:absolute;left:1128px;top:318px;width:34px;height:32px;background:#444447;"></div>
<div style="position:absolute;left:1162px;top:318px;width:34px;height:32px;background:#444447;"></div>
<div style="position:absolute;left:1162px;top:318px;width:1px;height:32px;background:#88888c;"></div>
<div style="position:absolute;left:1137px;top:333px;width:16px;height:2px;background:#8e8e92;"></div>
<div style="position:absolute;left:1171px;top:333px;width:16px;height:2px;background:#8e8e92;"></div>
<div style="position:absolute;left:1178px;top:326px;width:2px;height:16px;background:#8e8e92;"></div>
<div style="position:absolute;left:1128px;top:360px;width:68px;height:28px;background:#1c1c1d;"></div>
<div class="db" style="left:1128px;top:360px;width:63px">0,0<span>dB</span></div>
<svg width="54" height="104" viewBox="0 0 54 104" style="position:absolute;left:1135px;top:404px"><use href="#tk"/><rect x="30" y="2" width="24" height="100" fill="#1c1c1c"/><rect x="33" y="91.00" width="18" height="8" fill="#33d600"/><rect x="33" y="81.40" width="18" height="8" fill="#33d600"/><rect x="33" y="71.80" width="18" height="8" fill="#33d600"/><rect x="33" y="62.20" width="18" height="8" fill="#33d600"/><rect x="33" y="52.60" width="18" height="8" fill="#33d600"/></svg>
<div class="knob" style="left:1145px;top:445px"><i></i></div>
<div style="position:absolute;left:1200px;top:182px;width:76px;height:342px;background:#3a3a3d;"></div>
<div style="position:absolute;left:1204px;top:188px;width:68px;height:40px;background:#46464a;"></div>
<div class="num" style="left:1204px;top:189px;width:68px">14</div>
<div style="position:absolute;left:1204px;top:228px;width:68px;height:40px;background:#1c1c1d;"></div>
<div class="nm" style="left:1204px;top:229px;width:68px">ENG</div>
<div style="position:absolute;left:1204px;top:276px;width:68px;height:32px;background:#46464a;box-sizing:border-box;border:1px solid #343437"></div>
<svg width="24" height="24" viewBox="0 0 24 24" style="position:absolute;left:1226px;top:280px"><path d="M3.6 9.6H6.6L11.1 5.1V18.9L6.6 14.4H3.6Z" fill="none" stroke="#bdbdc1" stroke-width="1.2" stroke-linejoin="miter"/><path d="M16.1 8.2Q19.3 12 16.1 15.8" fill="none" stroke="#bdbdc1" stroke-width="1.2"/><path d="M18.4 6.1Q22.8 12 18.4 17.9" fill="none" stroke="#bdbdc1" stroke-width="1.2"/></svg>
<div style="position:absolute;left:1204px;top:318px;width:34px;height:32px;background:#444447;"></div>
<div style="position:absolute;left:1238px;top:318px;width:34px;height:32px;background:#444447;"></div>
<div style="position:absolute;left:1238px;top:318px;width:1px;height:32px;background:#88888c;"></div>
<div style="position:absolute;left:1213px;top:333px;width:16px;height:2px;background:#8e8e92;"></div>
<div style="position:absolute;left:1247px;top:333px;width:16px;height:2px;background:#8e8e92;"></div>
<div style="position:absolute;left:1254px;top:326px;width:2px;height:16px;background:#8e8e92;"></div>
<div style="position:absolute;left:1204px;top:360px;width:68px;height:28px;background:#1c1c1d;"></div>
<div class="db" style="left:1204px;top:360px;width:63px">0,0<span>dB</span></div>
<svg width="54" height="104" viewBox="0 0 54 104" style="position:absolute;left:1211px;top:404px"><use href="#tk"/><rect x="30" y="2" width="24" height="100" fill="#1c1c1c"/><rect x="33" y="91.00" width="18" height="8" fill="#33d600"/><rect x="33" y="81.40" width="18" height="8" fill="#33d600"/><rect x="33" y="71.80" width="18" height="8" fill="#33d600"/><rect x="33" y="62.20" width="18" height="8" fill="#33d600"/><rect x="33" y="52.60" width="18" height="8" fill="#33d600"/></svg>
<div class="knob" style="left:1221px;top:445px"><i></i></div>
<div style="position:absolute;left:1280px;top:188px;width:68px;height:40px;background:#46464a;"></div>
<div class="num" style="left:1280px;top:189px;width:68px">15</div>
<div style="position:absolute;left:1280px;top:228px;width:68px;height:40px;background:#1c1c1d;"></div>
<div class="nm" style="left:1280px;top:229px;width:68px">ITA</div>
<div style="position:absolute;left:1280px;top:276px;width:68px;height:32px;background:#46464a;box-sizing:border-box;border:1px solid #343437"></div>
<svg width="24" height="24" viewBox="0 0 24 24" style="position:absolute;left:1302px;top:280px"><path d="M3.6 9.6H6.6L11.1 5.1V18.9L6.6 14.4H3.6Z" fill="none" stroke="#bdbdc1" stroke-width="1.2" stroke-linejoin="miter"/><path d="M16.1 8.2Q19.3 12 16.1 15.8" fill="none" stroke="#bdbdc1" stroke-width="1.2"/><path d="M18.4 6.1Q22.8 12 18.4 17.9" fill="none" stroke="#bdbdc1" stroke-width="1.2"/></svg>
<div style="position:absolute;left:1280px;top:318px;width:34px;height:32px;background:#444447;"></div>
<div style="position:absolute;left:1314px;top:318px;width:34px;height:32px;background:#444447;"></div>
<div style="position:absolute;left:1314px;top:318px;width:1px;height:32px;background:#88888c;"></div>
<div style="position:absolute;left:1289px;top:333px;width:16px;height:2px;background:#8e8e92;"></div>
<div style="position:absolute;left:1323px;top:333px;width:16px;height:2px;background:#8e8e92;"></div>
<div style="position:absolute;left:1330px;top:326px;width:2px;height:16px;background:#8e8e92;"></div>
<div style="position:absolute;left:1280px;top:360px;width:68px;height:28px;background:#1c1c1d;"></div>
<div class="db" style="left:1280px;top:360px;width:63px">0,0<span>dB</span></div>
<svg width="54" height="104" viewBox="0 0 54 104" style="position:absolute;left:1287px;top:404px"><use href="#tk"/><rect x="30" y="2" width="24" height="100" fill="#1c1c1c"/><rect x="33" y="91.00" width="18" height="8" fill="#33d600"/><rect x="33" y="81.40" width="18" height="8" fill="#33d600"/><rect x="33" y="71.80" width="18" height="8" fill="#33d600"/><rect x="33" y="62.20" width="18" height="8" fill="#33d600"/><rect x="33" y="52.60" width="18" height="8" fill="#33d600"/></svg>
<div class="knob" style="left:1297px;top:445px"><i></i></div>
<div style="position:absolute;left:1352px;top:182px;width:76px;height:342px;background:#3a3a3d;"></div>
<div style="position:absolute;left:1356px;top:188px;width:68px;height:40px;background:#46464a;"></div>
<div class="num" style="left:1356px;top:189px;width:68px">17</div>
<div style="position:absolute;left:1356px;top:228px;width:68px;height:40px;background:#1c1c1d;"></div>
<div class="nm" style="left:1356px;top:229px;width:68px">EST</div>
<div style="position:absolute;left:1356px;top:276px;width:68px;height:32px;background:#46464a;box-sizing:border-box;border:1px solid #343437"></div>
<svg width="24" height="24" viewBox="0 0 24 24" style="position:absolute;left:1378px;top:280px"><path d="M3.6 9.6H6.6L11.1 5.1V18.9L6.6 14.4H3.6Z" fill="none" stroke="#bdbdc1" stroke-width="1.2" stroke-linejoin="miter"/><path d="M16.1 8.2Q19.3 12 16.1 15.8" fill="none" stroke="#bdbdc1" stroke-width="1.2"/><path d="M18.4 6.1Q22.8 12 18.4 17.9" fill="none" stroke="#bdbdc1" stroke-width="1.2"/></svg>
<div style="position:absolute;left:1356px;top:318px;width:34px;height:32px;background:#444447;"></div>
<div style="position:absolute;left:1390px;top:318px;width:34px;height:32px;background:#444447;"></div>
<div style="position:absolute;left:1390px;top:318px;width:1px;height:32px;background:#88888c;"></div>
<div style="position:absolute;left:1365px;top:333px;width:16px;height:2px;background:#8e8e92;"></div>
<div style="position:absolute;left:1399px;top:333px;width:16px;height:2px;background:#8e8e92;"></div>
<div style="position:absolute;left:1406px;top:326px;width:2px;height:16px;background:#8e8e92;"></div>
<div style="position:absolute;left:1356px;top:360px;width:68px;height:28px;background:#1c1c1d;"></div>
<div class="db" style="left:1356px;top:360px;width:63px">0,0<span>dB</span></div>
<svg width="54" height="104" viewBox="0 0 54 104" style="position:absolute;left:1363px;top:404px"><use href="#tk"/><rect x="30" y="2" width="24" height="100" fill="#1c1c1c"/><rect x="33" y="91.00" width="18" height="8" fill="#33d600"/><rect x="33" y="81.40" width="18" height="8" fill="#33d600"/><rect x="33" y="71.80" width="18" height="8" fill="#33d600"/><rect x="33" y="62.20" width="18" height="8" fill="#33d600"/><rect x="33" y="52.60" width="18" height="8" fill="#33d600"/><rect x="33" y="43.00" width="18" height="8" fill="#33d600"/><rect x="33" y="33.40" width="18" height="8" fill="#ffb400"/><rect x="33" y="23.80" width="18" height="8" fill="#ffb400"/></svg>
<div class="knob" style="left:1373px;top:445px"><i></i></div>
<div style="position:absolute;left:1432px;top:188px;width:68px;height:40px;background:#46464a;"></div>
<div class="num" style="left:1432px;top:189px;width:68px">18</div>
<div style="position:absolute;left:1432px;top:228px;width:68px;height:40px;background:#1c1c1d;"></div>
<div class="nm" style="left:1432px;top:229px;width:68px">FRA</div>
<div style="position:absolute;left:1432px;top:276px;width:68px;height:32px;background:#46464a;box-sizing:border-box;border:1px solid #343437"></div>
<svg width="24" height="24" viewBox="0 0 24 24" style="position:absolute;left:1454px;top:280px"><path d="M3.6 9.6H6.6L11.1 5.1V18.9L6.6 14.4H3.6Z" fill="none" stroke="#bdbdc1" stroke-width="1.2" stroke-linejoin="miter"/><path d="M16.1 8.2Q19.3 12 16.1 15.8" fill="none" stroke="#bdbdc1" stroke-width="1.2"/><path d="M18.4 6.1Q22.8 12 18.4 17.9" fill="none" stroke="#bdbdc1" stroke-width="1.2"/></svg>
<div style="position:absolute;left:1432px;top:318px;width:34px;height:32px;background:#444447;"></div>
<div style="position:absolute;left:1466px;top:318px;width:34px;height:32px;background:#444447;"></div>
<div style="position:absolute;left:1466px;top:318px;width:1px;height:32px;background:#88888c;"></div>
<div style="position:absolute;left:1441px;top:333px;width:16px;height:2px;background:#8e8e92;"></div>
<div style="position:absolute;left:1475px;top:333px;width:16px;height:2px;background:#8e8e92;"></div>
<div style="position:absolute;left:1482px;top:326px;width:2px;height:16px;background:#8e8e92;"></div>
<div style="position:absolute;left:1432px;top:360px;width:68px;height:28px;background:#1c1c1d;"></div>
<div class="db" style="left:1432px;top:360px;width:63px">0,0<span>dB</span></div>
<svg width="54" height="104" viewBox="0 0 54 104" style="position:absolute;left:1439px;top:404px"><use href="#tk"/><rect x="30" y="2" width="24" height="100" fill="#1c1c1c"/><rect x="33" y="91.00" width="18" height="8" fill="#33d600"/><rect x="33" y="81.40" width="18" height="8" fill="#33d600"/><rect x="33" y="71.80" width="18" height="8" fill="#33d600"/><rect x="33" y="62.20" width="18" height="8" fill="#33d600"/><rect x="33" y="52.60" width="18" height="8" fill="#33d600"/></svg>
<div class="knob" style="left:1449px;top:445px"><i></i></div>
<div style="position:absolute;left:1504px;top:182px;width:76px;height:342px;background:#3a3a3d;"></div>
<div style="position:absolute;left:1508px;top:188px;width:68px;height:40px;background:#46464a;"></div>
<div class="num" style="left:1508px;top:189px;width:68px">14</div>
<div style="position:absolute;left:1508px;top:228px;width:68px;height:40px;background:#1c1c1d;"></div>
<div class="nm" style="left:1508px;top:229px;width:68px">LAV</div>
<div style="position:absolute;left:1508px;top:276px;width:68px;height:32px;background:#46464a;box-sizing:border-box;border:1px solid #343437"></div>
<svg width="24" height="24" viewBox="0 0 24 24" style="position:absolute;left:1530px;top:280px"><path d="M3.6 9.6H6.6L11.1 5.1V18.9L6.6 14.4H3.6Z" fill="none" stroke="#bdbdc1" stroke-width="1.2" stroke-linejoin="miter"/><path d="M16.1 8.2Q19.3 12 16.1 15.8" fill="none" stroke="#bdbdc1" stroke-width="1.2"/><path d="M18.4 6.1Q22.8 12 18.4 17.9" fill="none" stroke="#bdbdc1" stroke-width="1.2"/></svg>
<div style="position:absolute;left:1508px;top:318px;width:34px;height:32px;background:#444447;"></div>
<div style="position:absolute;left:1542px;top:318px;width:34px;height:32px;background:#444447;"></div>
<div style="position:absolute;left:1542px;top:318px;width:1px;height:32px;background:#88888c;"></div>
<div style="position:absolute;left:1517px;top:333px;width:16px;height:2px;background:#8e8e92;"></div>
<div style="position:absolute;left:1551px;top:333px;width:16px;height:2px;background:#8e8e92;"></div>
<div style="position:absolute;left:1558px;top:326px;width:2px;height:16px;background:#8e8e92;"></div>
<div style="position:absolute;left:1508px;top:360px;width:68px;height:28px;background:#1c1c1d;"></div>
<div class="db" style="left:1508px;top:360px;width:63px">0,0<span>dB</span></div>
<svg width="54" height="104" viewBox="0 0 54 104" style="position:absolute;left:1515px;top:404px"><use href="#tk"/><rect x="30" y="2" width="24" height="100" fill="#1c1c1c"/><rect x="33" y="91.00" width="18" height="8" fill="#33d600"/><rect x="33" y="81.40" width="18" height="8" fill="#33d600"/><rect x="33" y="71.80" width="18" height="8" fill="#33d600"/><rect x="33" y="62.20" width="18" height="8" fill="#33d600"/><rect x="33" y="52.60" width="18" height="8" fill="#33d600"/></svg>
<div class="knob" style="left:1525px;top:445px"><i></i></div>
<div style="position:absolute;left:1584px;top:188px;width:68px;height:40px;background:#46464a;"></div>
<div class="num" style="left:1584px;top:189px;width:68px">15</div>
<div style="position:absolute;left:1584px;top:228px;width:68px;height:40px;background:#1c1c1d;"></div>
<div class="nm" style="left:1584px;top:229px;width:68px">LIT</div>
<div style="position:absolute;left:1584px;top:276px;width:68px;height:32px;background:#46464a;box-sizing:border-box;border:1px solid #343437"></div>
<svg width="24" height="24" viewBox="0 0 24 24" style="position:absolute;left:1606px;top:280px"><path d="M3.6 9.6H6.6L11.1 5.1V18.9L6.6 14.4H3.6Z" fill="none" stroke="#bdbdc1" stroke-width="1.2" stroke-linejoin="miter"/><path d="M16.1 8.2Q19.3 12 16.1 15.8" fill="none" stroke="#bdbdc1" stroke-width="1.2"/><path d="M18.4 6.1Q22.8 12 18.4 17.9" fill="none" stroke="#bdbdc1" stroke-width="1.2"/></svg>
<div style="position:absolute;left:1584px;top:318px;width:34px;height:32px;background:#444447;"></div>
<div style="position:absolute;left:1618px;top:318px;width:34px;height:32px;background:#444447;"></div>
<div style="position:absolute;left:1618px;top:318px;width:1px;height:32px;background:#88888c;"></div>
<div style="position:absolute;left:1593px;top:333px;width:16px;height:2px;background:#8e8e92;"></div>
<div style="position:absolute;left:1627px;top:333px;width:16px;height:2px;background:#8e8e92;"></div>
<div style="position:absolute;left:1634px;top:326px;width:2px;height:16px;background:#8e8e92;"></div>
<div style="position:absolute;left:1584px;top:360px;width:68px;height:28px;background:#1c1c1d;"></div>
<div class="db" style="left:1584px;top:360px;width:63px">0,0<span>dB</span></div>
<svg width="54" height="104" viewBox="0 0 54 104" style="position:absolute;left:1591px;top:404px"><use href="#tk"/><rect x="30" y="2" width="24" height="100" fill="#1c1c1c"/><rect x="33" y="91.00" width="18" height="8" fill="#33d600"/><rect x="33" y="81.40" width="18" height="8" fill="#33d600"/><rect x="33" y="71.80" width="18" height="8" fill="#33d600"/><rect x="33" y="62.20" width="18" height="8" fill="#33d600"/><rect x="33" y="52.60" width="18" height="8" fill="#33d600"/></svg>
<div class="knob" style="left:1601px;top:445px"><i></i></div>
<div style="position:absolute;left:1656px;top:182px;width:76px;height:342px;background:#3a3a3d;"></div>
<div style="position:absolute;left:1660px;top:188px;width:68px;height:40px;background:#46464a;"></div>
<div class="num" style="left:1660px;top:189px;width:68px">16</div>
<div style="position:absolute;left:1660px;top:228px;width:68px;height:40px;background:#1c1c1d;"></div>
<div class="nm" style="left:1660px;top:229px;width:68px">HUN</div>
<div style="position:absolute;left:1660px;top:276px;width:68px;height:32px;background:#46464a;box-sizing:border-box;border:1px solid #343437"></div>
<svg width="24" height="24" viewBox="0 0 24 24" style="position:absolute;left:1682px;top:280px"><path d="M3.6 9.6H6.6L11.1 5.1V18.9L6.6 14.4H3.6Z" fill="none" stroke="#bdbdc1" stroke-width="1.2" stroke-linejoin="miter"/><path d="M16.1 8.2Q19.3 12 16.1 15.8" fill="none" stroke="#bdbdc1" stroke-width="1.2"/><path d="M18.4 6.1Q22.8 12 18.4 17.9" fill="none" stroke="#bdbdc1" stroke-width="1.2"/></svg>
<div style="position:absolute;left:1660px;top:318px;width:34px;height:32px;background:#444447;"></div>
<div style="position:absolute;left:1694px;top:318px;width:34px;height:32px;background:#444447;"></div>
<div style="position:absolute;left:1694px;top:318px;width:1px;height:32px;background:#88888c;"></div>
<div style="position:absolute;left:1669px;top:333px;width:16px;height:2px;background:#8e8e92;"></div>
<div style="position:absolute;left:1703px;top:333px;width:16px;height:2px;background:#8e8e92;"></div>
<div style="position:absolute;left:1710px;top:326px;width:2px;height:16px;background:#8e8e92;"></div>
<div style="position:absolute;left:1660px;top:360px;width:68px;height:28px;background:#1c1c1d;"></div>
<div class="db" style="left:1660px;top:360px;width:63px">0,0<span>dB</span></div>
<svg width="54" height="104" viewBox="0 0 54 104" style="position:absolute;left:1667px;top:404px"><use href="#tk"/><rect x="30" y="2" width="24" height="100" fill="#1c1c1c"/><rect x="33" y="91.00" width="18" height="8" fill="#33d600"/><rect x="33" y="81.40" width="18" height="8" fill="#33d600"/><rect x="33" y="71.80" width="18" height="8" fill="#33d600"/><rect x="33" y="62.20" width="18" height="8" fill="#33d600"/><rect x="33" y="52.60" width="18" height="8" fill="#33d600"/></svg>
<div class="knob" style="left:1677px;top:445px"><i></i></div>
<div style="position:absolute;left:1736px;top:188px;width:68px;height:40px;background:#46464a;"></div>
<div class="num" style="left:1736px;top:189px;width:68px">17</div>
<div style="position:absolute;left:1736px;top:228px;width:68px;height:40px;background:#1c1c1d;"></div>
<div class="nm" style="left:1736px;top:229px;width:68px">MLT</div>
<div style="position:absolute;left:1736px;top:276px;width:68px;height:32px;background:#46464a;box-sizing:border-box;border:1px solid #343437"></div>
<svg width="24" height="24" viewBox="0 0 24 24" style="position:absolute;left:1758px;top:280px"><path d="M3.6 9.6H6.6L11.1 5.1V18.9L6.6 14.4H3.6Z" fill="none" stroke="#bdbdc1" stroke-width="1.2" stroke-linejoin="miter"/><path d="M16.1 8.2Q19.3 12 16.1 15.8" fill="none" stroke="#bdbdc1" stroke-width="1.2"/><path d="M18.4 6.1Q22.8 12 18.4 17.9" fill="none" stroke="#bdbdc1" stroke-width="1.2"/></svg>
<div style="position:absolute;left:1736px;top:318px;width:34px;height:32px;background:#444447;"></div>
<div style="position:absolute;left:1770px;top:318px;width:34px;height:32px;background:#444447;"></div>
<div style="position:absolute;left:1770px;top:318px;width:1px;height:32px;background:#88888c;"></div>
<div style="position:absolute;left:1745px;top:333px;width:16px;height:2px;background:#8e8e92;"></div>
<div style="position:absolute;left:1779px;top:333px;width:16px;height:2px;background:#8e8e92;"></div>
<div style="position:absolute;left:1786px;top:326px;width:2px;height:16px;background:#8e8e92;"></div>
<div style="position:absolute;left:1736px;top:360px;width:68px;height:28px;background:#1c1c1d;"></div>
<div class="db" style="left:1736px;top:360px;width:63px">0,0<span>dB</span></div>
<svg width="54" height="104" viewBox="0 0 54 104" style="position:absolute;left:1743px;top:404px"><use href="#tk"/><rect x="30" y="2" width="24" height="100" fill="#1c1c1c"/><rect x="33" y="91.00" width="18" height="8" fill="#33d600"/><rect x="33" y="81.40" width="18" height="8" fill="#33d600"/><rect x="33" y="71.80" width="18" height="8" fill="#33d600"/><rect x="33" y="62.20" width="18" height="8" fill="#33d600"/><rect x="33" y="52.60" width="18" height="8" fill="#33d600"/></svg>
<div class="knob" style="left:1753px;top:445px"><i></i></div>
<div style="position:absolute;left:112px;top:526px;width:76px;height:355px;background:#3a3a3d;"></div>
<div style="position:absolute;left:120px;top:532px;width:60px;height:40px;background:#a0289a;"></div>
<svg width="22" height="22" viewBox="0 0 22 22" style="position:absolute;left:139px;top:541px"><circle cx="11" cy="11" r="9" fill="none" stroke="#fff" stroke-width="0.9"/><circle cx="11" cy="11" r="7.2" fill="none" stroke="#fff" stroke-width="0.9"/><circle cx="11" cy="11" r="5.2" fill="#fff"/></svg>
<div style="position:absolute;left:120px;top:572px;width:60px;height:40px;background:#1c1c1d;"></div>
<div class="nm" style="left:120px;top:573px;width:60px">AUX</div>
<div style="position:absolute;left:120px;top:620px;width:60px;height:32px;background:#404043;box-sizing:border-box;border:1px solid #333336"></div>
<div style="position:absolute;left:124px;top:624px;width:52px;height:24px;background:#d6d6d9;"></div>
<div style="position:absolute;left:162px;top:628px;width:10px;height:16px;background:#66666a;"></div>
<div style="position:absolute;left:120px;top:662px;width:30px;height:32px;background:#444447;"></div>
<div style="position:absolute;left:150px;top:662px;width:30px;height:32px;background:#444447;"></div>
<div style="position:absolute;left:150px;top:662px;width:1px;height:32px;background:#88888c;"></div>
<div style="position:absolute;left:128px;top:677px;width:14px;height:2px;background:#8e8e92;"></div>
<div style="position:absolute;left:158px;top:677px;width:14px;height:2px;background:#8e8e92;"></div>
<div style="position:absolute;left:164px;top:670px;width:2px;height:16px;background:#8e8e92;"></div>
<div style="position:absolute;left:120px;top:704px;width:60px;height:28px;background:#1c1c1d;"></div>
<div class="db" style="left:120px;top:704px;width:55px">+6,0<span>dB</span></div>
<svg width="53" height="104" viewBox="0 0 53 104" style="position:absolute;left:127px;top:748px"><use href="#tk"/><rect x="30" y="2" width="23" height="100" fill="#1c1c1c"/><rect x="33" y="91.00" width="17" height="8" fill="#33d600"/><rect x="33" y="81.40" width="17" height="8" fill="#33d600"/><rect x="33" y="71.80" width="17" height="8" fill="#33d600"/></svg>
<div class="knob" style="left:137px;top:789px"><i></i></div>
<div style="position:absolute;left:212px;top:526px;width:76px;height:342px;background:#3a3a3d;"></div>
<div style="position:absolute;left:216px;top:532px;width:68px;height:40px;background:#46464a;"></div>
<div class="num" style="left:216px;top:533px;width:68px">18</div>
<div style="position:absolute;left:216px;top:572px;width:68px;height:40px;background:#1c1c1d;"></div>
<div class="nm" style="left:216px;top:573px;width:68px">POL</div>
<div style="position:absolute;left:216px;top:620px;width:68px;height:32px;background:#46464a;box-sizing:border-box;border:1px solid #343437"></div>
<svg width="24" height="24" viewBox="0 0 24 24" style="position:absolute;left:238px;top:624px"><path d="M3.6 9.6H6.6L11.1 5.1V18.9L6.6 14.4H3.6Z" fill="none" stroke="#bdbdc1" stroke-width="1.2" stroke-linejoin="miter"/><path d="M16.1 8.2Q19.3 12 16.1 15.8" fill="none" stroke="#bdbdc1" stroke-width="1.2"/><path d="M18.4 6.1Q22.8 12 18.4 17.9" fill="none" stroke="#bdbdc1" stroke-width="1.2"/></svg>
<div style="position:absolute;left:216px;top:662px;width:34px;height:32px;background:#444447;"></div>
<div style="position:absolute;left:250px;top:662px;width:34px;height:32px;background:#444447;"></div>
<div style="position:absolute;left:250px;top:662px;width:1px;height:32px;background:#88888c;"></div>
<div style="position:absolute;left:225px;top:677px;width:16px;height:2px;background:#8e8e92;"></div>
<div style="position:absolute;left:259px;top:677px;width:16px;height:2px;background:#8e8e92;"></div>
<div style="position:absolute;left:266px;top:670px;width:2px;height:16px;background:#8e8e92;"></div>
<div style="position:absolute;left:216px;top:704px;width:68px;height:28px;background:#1c1c1d;"></div>
<div class="db" style="left:216px;top:704px;width:63px">0,0<span>dB</span></div>
<svg width="54" height="104" viewBox="0 0 54 104" style="position:absolute;left:223px;top:748px"><use href="#tk"/><rect x="30" y="2" width="24" height="100" fill="#1c1c1c"/><rect x="33" y="91.00" width="18" height="8" fill="#33d600"/><rect x="33" y="81.40" width="18" height="8" fill="#33d600"/><rect x="33" y="71.80" width="18" height="8" fill="#33d600"/><rect x="33" y="62.20" width="18" height="8" fill="#33d600"/><rect x="33" y="52.60" width="18" height="8" fill="#33d600"/></svg>
<div class="knob" style="left:233px;top:789px"><i></i></div>
<div style="position:absolute;left:292px;top:532px;width:68px;height:40px;background:#46464a;"></div>
<div class="num" style="left:292px;top:533px;width:68px">19</div>
<div style="position:absolute;left:292px;top:572px;width:68px;height:40px;background:#1c1c1d;"></div>
<div class="nm" style="left:292px;top:573px;width:68px">SLK</div>
<div style="position:absolute;left:292px;top:620px;width:68px;height:32px;background:#46464a;box-sizing:border-box;border:1px solid #343437"></div>
<svg width="24" height="24" viewBox="0 0 24 24" style="position:absolute;left:314px;top:624px"><path d="M3.6 9.6H6.6L11.1 5.1V18.9L6.6 14.4H3.6Z" fill="none" stroke="#bdbdc1" stroke-width="1.2" stroke-linejoin="miter"/><path d="M16.1 8.2Q19.3 12 16.1 15.8" fill="none" stroke="#bdbdc1" stroke-width="1.2"/><path d="M18.4 6.1Q22.8 12 18.4 17.9" fill="none" stroke="#bdbdc1" stroke-width="1.2"/></svg>
<div style="position:absolute;left:292px;top:662px;width:34px;height:32px;background:#444447;"></div>
<div style="position:absolute;left:326px;top:662px;width:34px;height:32px;background:#444447;"></div>
<div style="position:absolute;left:326px;top:662px;width:1px;height:32px;background:#88888c;"></div>
<div style="position:absolute;left:301px;top:677px;width:16px;height:2px;background:#8e8e92;"></div>
<div style="position:absolute;left:335px;top:677px;width:16px;height:2px;background:#8e8e92;"></div>
<div style="position:absolute;left:342px;top:670px;width:2px;height:16px;background:#8e8e92;"></div>
<div style="position:absolute;left:292px;top:704px;width:68px;height:28px;background:#1c1c1d;"></div>
<div class="db" style="left:292px;top:704px;width:63px">0,0<span>dB</span></div>
<svg width="54" height="104" viewBox="0 0 54 104" style="position:absolute;left:299px;top:748px"><use href="#tk"/><rect x="30" y="2" width="24" height="100" fill="#1c1c1c"/><rect x="33" y="91.00" width="18" height="8" fill="#33d600"/><rect x="33" y="81.40" width="18" height="8" fill="#33d600"/><rect x="33" y="71.80" width="18" height="8" fill="#33d600"/><rect x="33" y="62.20" width="18" height="8" fill="#33d600"/><rect x="33" y="52.60" width="18" height="8" fill="#33d600"/></svg>
<div class="knob" style="left:309px;top:789px"><i></i></div>
<div style="position:absolute;left:364px;top:526px;width:76px;height:342px;background:#3a3a3d;"></div>
<div style="position:absolute;left:368px;top:532px;width:68px;height:40px;background:#46464a;"></div>
<div class="num" style="left:368px;top:533px;width:68px">20</div>
<div style="position:absolute;left:368px;top:572px;width:68px;height:40px;background:#1c1c1d;"></div>
<div class="nm" style="left:368px;top:573px;width:68px">SLV</div>
<div style="position:absolute;left:368px;top:620px;width:68px;height:32px;background:#46464a;box-sizing:border-box;border:1px solid #343437"></div>
<svg width="24" height="24" viewBox="0 0 24 24" style="position:absolute;left:390px;top:624px"><path d="M3.6 9.6H6.6L11.1 5.1V18.9L6.6 14.4H3.6Z" fill="none" stroke="#bdbdc1" stroke-width="1.2" stroke-linejoin="miter"/><path d="M16.1 8.2Q19.3 12 16.1 15.8" fill="none" stroke="#bdbdc1" stroke-width="1.2"/><path d="M18.4 6.1Q22.8 12 18.4 17.9" fill="none" stroke="#bdbdc1" stroke-width="1.2"/></svg>
<div style="position:absolute;left:368px;top:662px;width:34px;height:32px;background:#444447;"></div>
<div style="position:absolute;left:402px;top:662px;width:34px;height:32px;background:#444447;"></div>
<div style="position:absolute;left:402px;top:662px;width:1px;height:32px;background:#88888c;"></div>
<div style="position:absolute;left:377px;top:677px;width:16px;height:2px;background:#8e8e92;"></div>
<div style="position:absolute;left:411px;top:677px;width:16px;height:2px;background:#8e8e92;"></div>
<div style="position:absolute;left:418px;top:670px;width:2px;height:16px;background:#8e8e92;"></div>
<div style="position:absolute;left:368px;top:704px;width:68px;height:28px;background:#1c1c1d;"></div>
<div class="db" style="left:368px;top:704px;width:63px">-12,0<span>dB</span></div>
<svg width="54" height="104" viewBox="0 0 54 104" style="position:absolute;left:375px;top:748px"><use href="#tk"/><rect x="30" y="2" width="24" height="100" fill="#1c1c1c"/><rect x="33" y="91.00" width="18" height="8" fill="#33d600"/><rect x="33" y="81.40" width="18" height="8" fill="#33d600"/><rect x="33" y="71.80" width="18" height="8" fill="#33d600"/><rect x="33" y="62.20" width="18" height="8" fill="#33d600"/><rect x="33" y="52.60" width="18" height="8" fill="#33d600"/></svg>
<div class="knob" style="left:385px;top:838px"><i></i></div>
<div style="position:absolute;left:444px;top:532px;width:68px;height:40px;background:#46464a;"></div>
<div class="num" style="left:444px;top:533px;width:68px">21</div>
<div style="position:absolute;left:444px;top:572px;width:68px;height:40px;background:#1c1c1d;"></div>
<div class="nm" style="left:444px;top:573px;width:68px">BUL</div>
<div style="position:absolute;left:444px;top:620px;width:68px;height:32px;background:#46464a;box-sizing:border-box;border:1px solid #343437"></div>
<svg width="24" height="24" viewBox="0 0 24 24" style="position:absolute;left:466px;top:624px"><path d="M3.6 9.6H6.6L11.1 5.1V18.9L6.6 14.4H3.6Z" fill="none" stroke="#bdbdc1" stroke-width="1.2" stroke-linejoin="miter"/><path d="M16.1 8.2Q19.3 12 16.1 15.8" fill="none" stroke="#bdbdc1" stroke-width="1.2"/><path d="M18.4 6.1Q22.8 12 18.4 17.9" fill="none" stroke="#bdbdc1" stroke-width="1.2"/></svg>
<div style="position:absolute;left:444px;top:662px;width:34px;height:32px;background:#444447;"></div>
<div style="position:absolute;left:478px;top:662px;width:34px;height:32px;background:#444447;"></div>
<div style="position:absolute;left:478px;top:662px;width:1px;height:32px;background:#88888c;"></div>
<div style="position:absolute;left:453px;top:677px;width:16px;height:2px;background:#8e8e92;"></div>
<div style="position:absolute;left:487px;top:677px;width:16px;height:2px;background:#8e8e92;"></div>
<div style="position:absolute;left:494px;top:670px;width:2px;height:16px;background:#8e8e92;"></div>
<div style="position:absolute;left:444px;top:704px;width:68px;height:28px;background:#1c1c1d;"></div>
<div class="db" style="left:444px;top:704px;width:63px">0,0<span>dB</span></div>
<svg width="54" height="104" viewBox="0 0 54 104" style="position:absolute;left:451px;top:748px"><use href="#tk"/><rect x="30" y="2" width="24" height="100" fill="#1c1c1c"/></svg>
<div class="knob" style="left:461px;top:789px"><i></i></div>
<div style="position:absolute;left:516px;top:526px;width:76px;height:342px;background:#3a3a3d;"></div>
<div style="position:absolute;left:520px;top:532px;width:68px;height:40px;background:#46464a;"></div>
<div class="num" style="left:520px;top:533px;width:68px">22</div>
<div style="position:absolute;left:520px;top:572px;width:68px;height:40px;background:#1c1c1d;"></div>
<div class="nm" style="left:520px;top:573px;width:68px">RON</div>
<div style="position:absolute;left:520px;top:620px;width:68px;height:32px;background:#46464a;box-sizing:border-box;border:1px solid #343437"></div>
<svg width="24" height="24" viewBox="0 0 24 24" style="position:absolute;left:542px;top:624px"><path d="M3.6 9.6H6.6L11.1 5.1V18.9L6.6 14.4H3.6Z" fill="none" stroke="#bdbdc1" stroke-width="1.2" stroke-linejoin="miter"/><path d="M16.1 8.2Q19.3 12 16.1 15.8" fill="none" stroke="#bdbdc1" stroke-width="1.2"/><path d="M18.4 6.1Q22.8 12 18.4 17.9" fill="none" stroke="#bdbdc1" stroke-width="1.2"/></svg>
<div style="position:absolute;left:520px;top:662px;width:34px;height:32px;background:#444447;"></div>
<div style="position:absolute;left:554px;top:662px;width:34px;height:32px;background:#444447;"></div>
<div style="position:absolute;left:554px;top:662px;width:1px;height:32px;background:#88888c;"></div>
<div style="position:absolute;left:529px;top:677px;width:16px;height:2px;background:#8e8e92;"></div>
<div style="position:absolute;left:563px;top:677px;width:16px;height:2px;background:#8e8e92;"></div>
<div style="position:absolute;left:570px;top:670px;width:2px;height:16px;background:#8e8e92;"></div>
<div style="position:absolute;left:520px;top:704px;width:68px;height:28px;background:#1c1c1d;"></div>
<div class="db" style="left:520px;top:704px;width:63px">0,0<span>dB</span></div>
<svg width="54" height="104" viewBox="0 0 54 104" style="position:absolute;left:527px;top:748px"><use href="#tk"/><rect x="30" y="2" width="24" height="100" fill="#1c1c1c"/><rect x="33" y="91.00" width="18" height="8" fill="#33d600"/></svg>
<div class="knob" style="left:537px;top:789px"><i></i></div>
<div style="position:absolute;left:596px;top:532px;width:68px;height:40px;background:#46464a;"></div>
<div class="num" style="left:596px;top:533px;width:68px">23</div>
<div style="position:absolute;left:596px;top:572px;width:68px;height:40px;background:#1c1c1d;"></div>
<div class="nm" style="left:596px;top:573px;width:68px">DANTE</div>
<div style="position:absolute;left:596px;top:620px;width:68px;height:32px;background:#46464a;box-sizing:border-box;border:1px solid #343437"></div>
<svg width="24" height="24" viewBox="0 0 24 24" style="position:absolute;left:618px;top:624px"><path d="M3.6 9.6H6.6L11.1 5.1V18.9L6.6 14.4H3.6Z" fill="none" stroke="#bdbdc1" stroke-width="1.2" stroke-linejoin="miter"/><path d="M16.1 8.2Q19.3 12 16.1 15.8" fill="none" stroke="#bdbdc1" stroke-width="1.2"/><path d="M18.4 6.1Q22.8 12 18.4 17.9" fill="none" stroke="#bdbdc1" stroke-width="1.2"/></svg>
<div style="position:absolute;left:596px;top:662px;width:34px;height:32px;background:#444447;"></div>
<div style="position:absolute;left:630px;top:662px;width:34px;height:32px;background:#444447;"></div>
<div style="position:absolute;left:630px;top:662px;width:1px;height:32px;background:#88888c;"></div>
<div style="position:absolute;left:605px;top:677px;width:16px;height:2px;background:#8e8e92;"></div>
<div style="position:absolute;left:639px;top:677px;width:16px;height:2px;background:#8e8e92;"></div>
<div style="position:absolute;left:646px;top:670px;width:2px;height:16px;background:#8e8e92;"></div>
<div style="position:absolute;left:596px;top:704px;width:68px;height:28px;background:#1c1c1d;"></div>
<div class="db" style="left:596px;top:704px;width:63px">0,0<span>dB</span></div>
<svg width="54" height="104" viewBox="0 0 54 104" style="position:absolute;left:603px;top:748px"><use href="#tk"/><rect x="30" y="2" width="24" height="100" fill="#1c1c1c"/><rect x="33" y="91.00" width="18" height="8" fill="#33d600"/><rect x="33" y="81.40" width="18" height="8" fill="#33d600"/></svg>
<div class="knob" style="left:613px;top:789px"><i></i></div>
<div style="position:absolute;left:668px;top:526px;width:76px;height:342px;background:#3a3a3d;"></div>
<div style="position:absolute;left:672px;top:532px;width:68px;height:40px;background:#46464a;"></div>
<div class="num" style="left:672px;top:533px;width:68px">24</div>
<div style="position:absolute;left:672px;top:572px;width:68px;height:40px;background:#1c1c1d;"></div>
<div class="nm" style="left:672px;top:573px;width:68px">GLE</div>
<div style="position:absolute;left:672px;top:620px;width:68px;height:32px;background:#46464a;box-sizing:border-box;border:1px solid #343437"></div>
<svg width="24" height="24" viewBox="0 0 24 24" style="position:absolute;left:694px;top:624px"><path d="M3.6 9.6H6.6L11.1 5.1V18.9L6.6 14.4H3.6Z" fill="none" stroke="#bdbdc1" stroke-width="1.2" stroke-linejoin="miter"/><path d="M16.1 8.2Q19.3 12 16.1 15.8" fill="none" stroke="#bdbdc1" stroke-width="1.2"/><path d="M18.4 6.1Q22.8 12 18.4 17.9" fill="none" stroke="#bdbdc1" stroke-width="1.2"/></svg>
<div style="position:absolute;left:672px;top:662px;width:34px;height:32px;background:#444447;"></div>
<div style="position:absolute;left:706px;top:662px;width:34px;height:32px;background:#444447;"></div>
<div style="position:absolute;left:706px;top:662px;width:1px;height:32px;background:#88888c;"></div>
<div style="position:absolute;left:681px;top:677px;width:16px;height:2px;background:#8e8e92;"></div>
<div style="position:absolute;left:715px;top:677px;width:16px;height:2px;background:#8e8e92;"></div>
<div style="position:absolute;left:722px;top:670px;width:2px;height:16px;background:#8e8e92;"></div>
<div style="position:absolute;left:672px;top:704px;width:68px;height:28px;background:#1c1c1d;"></div>
<div class="db" style="left:672px;top:704px;width:63px">0,0<span>dB</span></div>
<svg width="54" height="104" viewBox="0 0 54 104" style="position:absolute;left:679px;top:748px"><use href="#tk"/><rect x="30" y="2" width="24" height="100" fill="#1c1c1c"/><rect x="33" y="91.00" width="18" height="8" fill="#33d600"/><rect x="33" y="81.40" width="18" height="8" fill="#33d600"/><rect x="33" y="71.80" width="18" height="8" fill="#33d600"/></svg>
<div class="knob" style="left:689px;top:789px"><i></i></div>
<div style="position:absolute;left:748px;top:532px;width:68px;height:40px;background:#46464a;"></div>
<div class="num" style="left:748px;top:533px;width:68px">25</div>
<div style="position:absolute;left:748px;top:572px;width:68px;height:40px;background:#1c1c1d;"></div>
<div class="nm" style="left:748px;top:573px;width:68px">TUR</div>
<div style="position:absolute;left:748px;top:620px;width:68px;height:32px;background:#46464a;box-sizing:border-box;border:1px solid #343437"></div>
<svg width="24" height="24" viewBox="0 0 24 24" style="position:absolute;left:770px;top:624px"><path d="M3.6 9.6H6.6L11.1 5.1V18.9L6.6 14.4H3.6Z" fill="none" stroke="#bdbdc1" stroke-width="1.2" stroke-linejoin="miter"/><path d="M16.1 8.2Q19.3 12 16.1 15.8" fill="none" stroke="#bdbdc1" stroke-width="1.2"/><path d="M18.4 6.1Q22.8 12 18.4 17.9" fill="none" stroke="#bdbdc1" stroke-width="1.2"/></svg>
<div style="position:absolute;left:748px;top:662px;width:34px;height:32px;background:#444447;"></div>
<div style="position:absolute;left:782px;top:662px;width:34px;height:32px;background:#444447;"></div>
<div style="position:absolute;left:782px;top:662px;width:1px;height:32px;background:#88888c;"></div>
<div style="position:absolute;left:757px;top:677px;width:16px;height:2px;background:#8e8e92;"></div>
<div style="position:absolute;left:791px;top:677px;width:16px;height:2px;background:#8e8e92;"></div>
<div style="position:absolute;left:798px;top:670px;width:2px;height:16px;background:#8e8e92;"></div>
<div style="position:absolute;left:748px;top:704px;width:68px;height:28px;background:#1c1c1d;"></div>
<div class="db" style="left:748px;top:704px;width:63px">0,0<span>dB</span></div>
<svg width="54" height="104" viewBox="0 0 54 104" style="position:absolute;left:755px;top:748px"><use href="#tk"/><rect x="30" y="2" width="24" height="100" fill="#1c1c1c"/><rect x="33" y="91.00" width="18" height="8" fill="#33d600"/><rect x="33" y="81.40" width="18" height="8" fill="#33d600"/><rect x="33" y="71.80" width="18" height="8" fill="#33d600"/><rect x="33" y="62.20" width="18" height="8" fill="#33d600"/></svg>
<div class="knob" style="left:765px;top:789px"><i></i></div>
<div style="position:absolute;left:820px;top:526px;width:76px;height:342px;background:#3a3a3d;"></div>
<div style="position:absolute;left:824px;top:532px;width:68px;height:40px;background:#46464a;"></div>
<div class="num" style="left:824px;top:533px;width:68px">26</div>
<div style="position:absolute;left:824px;top:572px;width:68px;height:40px;background:#1c1c1d;"></div>
<div class="nm" style="left:824px;top:573px;width:68px">NOR</div>
<div style="position:absolute;left:824px;top:620px;width:68px;height:32px;background:#46464a;box-sizing:border-box;border:1px solid #343437"></div>
<svg width="24" height="24" viewBox="0 0 24 24" style="position:absolute;left:846px;top:624px"><path d="M3.6 9.6H6.6L11.1 5.1V18.9L6.6 14.4H3.6Z" fill="none" stroke="#bdbdc1" stroke-width="1.2" stroke-linejoin="miter"/><path d="M16.1 8.2Q19.3 12 16.1 15.8" fill="none" stroke="#bdbdc1" stroke-width="1.2"/><path d="M18.4 6.1Q22.8 12 18.4 17.9" fill="none" stroke="#bdbdc1" stroke-width="1.2"/></svg>
<div style="position:absolute;left:824px;top:662px;width:34px;height:32px;background:#444447;"></div>
<div style="position:absolute;left:858px;top:662px;width:34px;height:32px;background:#444447;"></div>
<div style="position:absolute;left:858px;top:662px;width:1px;height:32px;background:#88888c;"></div>
<div style="position:absolute;left:833px;top:677px;width:16px;height:2px;background:#8e8e92;"></div>
<div style="position:absolute;left:867px;top:677px;width:16px;height:2px;background:#8e8e92;"></div>
<div style="position:absolute;left:874px;top:670px;width:2px;height:16px;background:#8e8e92;"></div>
<div style="position:absolute;left:824px;top:704px;width:68px;height:28px;background:#1c1c1d;"></div>
<div class="db" style="left:824px;top:704px;width:63px">0,0<span>dB</span></div>
<svg width="54" height="104" viewBox="0 0 54 104" style="position:absolute;left:831px;top:748px"><use href="#tk"/><rect x="30" y="2" width="24" height="100" fill="#1c1c1c"/><rect x="33" y="91.00" width="18" height="8" fill="#33d600"/><rect x="33" y="81.40" width="18" height="8" fill="#33d600"/><rect x="33" y="71.80" width="18" height="8" fill="#33d600"/><rect x="33" y="62.20" width="18" height="8" fill="#33d600"/><rect x="33" y="52.60" width="18" height="8" fill="#33d600"/></svg>
<div class="knob" style="left:841px;top:789px"><i></i></div>
<div style="position:absolute;left:900px;top:532px;width:68px;height:40px;background:#46464a;"></div>
<div class="num" style="left:900px;top:533px;width:68px">27</div>
<div style="position:absolute;left:900px;top:572px;width:68px;height:40px;background:#1c1c1d;"></div>
<div class="nm" style="left:900px;top:573px;width:68px">ALB</div>
<div style="position:absolute;left:900px;top:620px;width:68px;height:32px;background:#46464a;box-sizing:border-box;border:1px solid #343437"></div>
<svg width="24" height="24" viewBox="0 0 24 24" style="position:absolute;left:922px;top:624px"><path d="M3.6 9.6H6.6L11.1 5.1V18.9L6.6 14.4H3.6Z" fill="none" stroke="#bdbdc1" stroke-width="1.2" stroke-linejoin="miter"/><path d="M16.1 8.2Q19.3 12 16.1 15.8" fill="none" stroke="#bdbdc1" stroke-width="1.2"/><path d="M18.4 6.1Q22.8 12 18.4 17.9" fill="none" stroke="#bdbdc1" stroke-width="1.2"/></svg>
<div style="position:absolute;left:900px;top:662px;width:34px;height:32px;background:#444447;"></div>
<div style="position:absolute;left:934px;top:662px;width:34px;height:32px;background:#444447;"></div>
<div style="position:absolute;left:934px;top:662px;width:1px;height:32px;background:#88888c;"></div>
<div style="position:absolute;left:909px;top:677px;width:16px;height:2px;background:#8e8e92;"></div>
<div style="position:absolute;left:943px;top:677px;width:16px;height:2px;background:#8e8e92;"></div>
<div style="position:absolute;left:950px;top:670px;width:2px;height:16px;background:#8e8e92;"></div>
<div style="position:absolute;left:900px;top:704px;width:68px;height:28px;background:#1c1c1d;"></div>
<div class="db" style="left:900px;top:704px;width:63px">0,0<span>dB</span></div>
<svg width="54" height="104" viewBox="0 0 54 104" style="position:absolute;left:907px;top:748px"><use href="#tk"/><rect x="30" y="2" width="24" height="100" fill="#1c1c1c"/><rect x="33" y="91.00" width="18" height="8" fill="#33d600"/><rect x="33" y="81.40" width="18" height="8" fill="#33d600"/><rect x="33" y="71.80" width="18" height="8" fill="#33d600"/><rect x="33" y="62.20" width="18" height="8" fill="#33d600"/><rect x="33" y="52.60" width="18" height="8" fill="#33d600"/><rect x="33" y="43.00" width="18" height="8" fill="#33d600"/></svg>
<div class="knob" style="left:917px;top:789px"><i></i></div>
<div style="position:absolute;left:972px;top:526px;width:76px;height:342px;background:#3a3a3d;"></div>
<div style="position:absolute;left:976px;top:532px;width:68px;height:40px;background:#46464a;"></div>
<div class="num" style="left:976px;top:533px;width:68px">28</div>
<div style="position:absolute;left:976px;top:572px;width:68px;height:40px;background:#1c1c1d;"></div>
<div class="nm" style="left:976px;top:573px;width:68px">CHE</div>
<div style="position:absolute;left:976px;top:620px;width:68px;height:32px;background:#46464a;box-sizing:border-box;border:1px solid #343437"></div>
<svg width="24" height="24" viewBox="0 0 24 24" style="position:absolute;left:998px;top:624px"><path d="M3.6 9.6H6.6L11.1 5.1V18.9L6.6 14.4H3.6Z" fill="none" stroke="#bdbdc1" stroke-width="1.2" stroke-linejoin="miter"/><path d="M16.1 8.2Q19.3 12 16.1 15.8" fill="none" stroke="#bdbdc1" stroke-width="1.2"/><path d="M18.4 6.1Q22.8 12 18.4 17.9" fill="none" stroke="#bdbdc1" stroke-width="1.2"/></svg>
<div style="position:absolute;left:976px;top:662px;width:34px;height:32px;background:#444447;"></div>
<div style="position:absolute;left:1010px;top:662px;width:34px;height:32px;background:#444447;"></div>
<div style="position:absolute;left:1010px;top:662px;width:1px;height:32px;background:#88888c;"></div>
<div style="position:absolute;left:985px;top:677px;width:16px;height:2px;background:#8e8e92;"></div>
<div style="position:absolute;left:1019px;top:677px;width:16px;height:2px;background:#8e8e92;"></div>
<div style="position:absolute;left:1026px;top:670px;width:2px;height:16px;background:#8e8e92;"></div>
<div style="position:absolute;left:976px;top:704px;width:68px;height:28px;background:#1c1c1d;"></div>
<div class="db" style="left:976px;top:704px;width:63px">0,0<span>dB</span></div>
<svg width="54" height="104" viewBox="0 0 54 104" style="position:absolute;left:983px;top:748px"><use href="#tk"/><rect x="30" y="2" width="24" height="100" fill="#1c1c1c"/><rect x="33" y="91.00" width="18" height="8" fill="#33d600"/><rect x="33" y="81.40" width="18" height="8" fill="#33d600"/><rect x="33" y="71.80" width="18" height="8" fill="#33d600"/><rect x="33" y="62.20" width="18" height="8" fill="#33d600"/><rect x="33" y="52.60" width="18" height="8" fill="#33d600"/><rect x="33" y="43.00" width="18" height="8" fill="#33d600"/><rect x="33" y="33.40" width="18" height="8" fill="#ffb400"/></svg>
<div class="knob" style="left:993px;top:789px"><i></i></div>
<div style="position:absolute;left:1052px;top:532px;width:68px;height:40px;background:#46464a;"></div>
<div class="num" style="left:1052px;top:533px;width:68px">29</div>
<div style="position:absolute;left:1052px;top:572px;width:68px;height:40px;background:#1c1c1d;"></div>
<div class="nm" style="left:1052px;top:573px;width:68px">LUX</div>
<div style="position:absolute;left:1052px;top:620px;width:68px;height:32px;background:#46464a;box-sizing:border-box;border:1px solid #343437"></div>
<svg width="24" height="24" viewBox="0 0 24 24" style="position:absolute;left:1074px;top:624px"><path d="M3.6 9.6H6.6L11.1 5.1V18.9L6.6 14.4H3.6Z" fill="none" stroke="#bdbdc1" stroke-width="1.2" stroke-linejoin="miter"/><path d="M16.1 8.2Q19.3 12 16.1 15.8" fill="none" stroke="#bdbdc1" stroke-width="1.2"/><path d="M18.4 6.1Q22.8 12 18.4 17.9" fill="none" stroke="#bdbdc1" stroke-width="1.2"/></svg>
<div style="position:absolute;left:1052px;top:662px;width:34px;height:32px;background:#444447;"></div>
<div style="position:absolute;left:1086px;top:662px;width:34px;height:32px;background:#444447;"></div>
<div style="position:absolute;left:1086px;top:662px;width:1px;height:32px;background:#88888c;"></div>
<div style="position:absolute;left:1061px;top:677px;width:16px;height:2px;background:#8e8e92;"></div>
<div style="position:absolute;left:1095px;top:677px;width:16px;height:2px;background:#8e8e92;"></div>
<div style="position:absolute;left:1102px;top:670px;width:2px;height:16px;background:#8e8e92;"></div>
<div style="position:absolute;left:1052px;top:704px;width:68px;height:28px;background:#1c1c1d;"></div>
<div class="db" style="left:1052px;top:704px;width:63px">0,0<span>dB</span></div>
<svg width="54" height="104" viewBox="0 0 54 104" style="position:absolute;left:1059px;top:748px"><use href="#tk"/><rect x="30" y="2" width="24" height="100" fill="#1c1c1c"/><rect x="33" y="91.00" width="18" height="8" fill="#33d600"/><rect x="33" y="81.40" width="18" height="8" fill="#33d600"/><rect x="33" y="71.80" width="18" height="8" fill="#33d600"/><rect x="33" y="62.20" width="18" height="8" fill="#33d600"/><rect x="33" y="52.60" width="18" height="8" fill="#33d600"/><rect x="33" y="43.00" width="18" height="8" fill="#33d600"/><rect x="33" y="33.40" width="18" height="8" fill="#ffb400"/><rect x="33" y="23.80" width="18" height="8" fill="#ffb400"/></svg>
<div class="knob" style="left:1069px;top:789px"><i></i></div>
<div style="position:absolute;left:1124px;top:526px;width:76px;height:342px;background:#3a3a3d;"></div>
<div style="position:absolute;left:1128px;top:532px;width:68px;height:40px;background:#46464a;"></div>
<div class="num" style="left:1128px;top:533px;width:68px">30</div>
<div style="position:absolute;left:1128px;top:572px;width:68px;height:40px;background:#1c1c1d;"></div>
<div class="nm" style="left:1128px;top:573px;width:68px">ISL</div>
<div style="position:absolute;left:1128px;top:620px;width:68px;height:32px;background:#46464a;box-sizing:border-box;border:1px solid #343437"></div>
<svg width="24" height="24" viewBox="0 0 24 24" style="position:absolute;left:1150px;top:624px"><path d="M3.6 9.6H6.6L11.1 5.1V18.9L6.6 14.4H3.6Z" fill="none" stroke="#bdbdc1" stroke-width="1.2" stroke-linejoin="miter"/><path d="M16.1 8.2Q19.3 12 16.1 15.8" fill="none" stroke="#bdbdc1" stroke-width="1.2"/><path d="M18.4 6.1Q22.8 12 18.4 17.9" fill="none" stroke="#bdbdc1" stroke-width="1.2"/></svg>
<div style="position:absolute;left:1128px;top:662px;width:34px;height:32px;background:#444447;"></div>
<div style="position:absolute;left:1162px;top:662px;width:34px;height:32px;background:#444447;"></div>
<div style="position:absolute;left:1162px;top:662px;width:1px;height:32px;background:#88888c;"></div>
<div style="position:absolute;left:1137px;top:677px;width:16px;height:2px;background:#8e8e92;"></div>
<div style="position:absolute;left:1171px;top:677px;width:16px;height:2px;background:#8e8e92;"></div>
<div style="position:absolute;left:1178px;top:670px;width:2px;height:16px;background:#8e8e92;"></div>
<div style="position:absolute;left:1128px;top:704px;width:68px;height:28px;background:#1c1c1d;"></div>
<div class="db" style="left:1128px;top:704px;width:63px">0,0<span>dB</span></div>
<svg width="54" height="104" viewBox="0 0 54 104" style="position:absolute;left:1135px;top:748px"><use href="#tk"/><rect x="30" y="2" width="24" height="100" fill="#1c1c1c"/><rect x="33" y="91.00" width="18" height="8" fill="#33d600"/><rect x="33" y="81.40" width="18" height="8" fill="#33d600"/><rect x="33" y="71.80" width="18" height="8" fill="#33d600"/><rect x="33" y="62.20" width="18" height="8" fill="#33d600"/><rect x="33" y="52.60" width="18" height="8" fill="#33d600"/><rect x="33" y="43.00" width="18" height="8" fill="#33d600"/><rect x="33" y="33.40" width="18" height="8" fill="#ffb400"/><rect x="33" y="23.80" width="18" height="8" fill="#ffb400"/><rect x="33" y="14.20" width="18" height="8" fill="#ffb400"/></svg>
<div class="knob" style="left:1145px;top:789px"><i></i></div>
<div style="position:absolute;left:1204px;top:532px;width:68px;height:40px;background:#46464a;"></div>
<div class="num" style="left:1204px;top:533px;width:68px">31</div>
<div style="position:absolute;left:1204px;top:572px;width:68px;height:40px;background:#1c1c1d;"></div>
<div class="nm" style="left:1204px;top:573px;width:68px">GRC</div>
<div style="position:absolute;left:1204px;top:620px;width:68px;height:32px;background:#46464a;box-sizing:border-box;border:1px solid #343437"></div>
<svg width="24" height="24" viewBox="0 0 24 24" style="position:absolute;left:1226px;top:624px"><path d="M3.6 9.6H6.6L11.1 5.1V18.9L6.6 14.4H3.6Z" fill="none" stroke="#bdbdc1" stroke-width="1.2" stroke-linejoin="miter"/><path d="M16.1 8.2Q19.3 12 16.1 15.8" fill="none" stroke="#bdbdc1" stroke-width="1.2"/><path d="M18.4 6.1Q22.8 12 18.4 17.9" fill="none" stroke="#bdbdc1" stroke-width="1.2"/></svg>
<div style="position:absolute;left:1204px;top:662px;width:34px;height:32px;background:#444447;"></div>
<div style="position:absolute;left:1238px;top:662px;width:34px;height:32px;background:#444447;"></div>
<div style="position:absolute;left:1238px;top:662px;width:1px;height:32px;background:#88888c;"></div>
<div style="position:absolute;left:1213px;top:677px;width:16px;height:2px;background:#8e8e92;"></div>
<div style="position:absolute;left:1247px;top:677px;width:16px;height:2px;background:#8e8e92;"></div>
<div style="position:absolute;left:1254px;top:670px;width:2px;height:16px;background:#8e8e92;"></div>
<div style="position:absolute;left:1204px;top:704px;width:68px;height:28px;background:#1c1c1d;"></div>
<div class="db" style="left:1204px;top:704px;width:63px">0,0<span>dB</span></div>
<svg width="54" height="104" viewBox="0 0 54 104" style="position:absolute;left:1211px;top:748px"><use href="#tk"/><rect x="30" y="2" width="24" height="100" fill="#1c1c1c"/><rect x="33" y="91.00" width="18" height="8" fill="#33d600"/><rect x="33" y="81.40" width="18" height="8" fill="#33d600"/><rect x="33" y="71.80" width="18" height="8" fill="#33d600"/><rect x="33" y="62.20" width="18" height="8" fill="#33d600"/><rect x="33" y="52.60" width="18" height="8" fill="#33d600"/><rect x="33" y="43.00" width="18" height="8" fill="#33d600"/><rect x="33" y="33.40" width="18" height="8" fill="#ffb400"/><rect x="33" y="23.80" width="18" height="8" fill="#ffb400"/><rect x="33" y="14.20" width="18" height="8" fill="#ffb400"/><rect x="33" y="4.60" width="18" height="8" fill="#ee1111"/></svg>
<div class="knob" style="left:1221px;top:789px"><i></i></div>
<div class="abs" style="left:20px;top:22px;width:16px;height:2px;background:#b2b2b4"></div>
<div class="abs" style="left:20px;top:27px;width:16px;height:2px;background:#b2b2b4"></div>
<div class="abs" style="left:20px;top:32px;width:16px;height:2px;background:#b2b2b4"></div>
<div class="abs" style="left:84px;top:16px;height:24px;line-height:24px;color:#fff;font-weight:bold;font-size:20px;">TXO</div>
<div class="abs" style="left:137px;top:17px;height:24px;line-height:24px;color:#bcbcc0;font-style:italic;font-size:17px;">Manually Controlled</div>
<div class="abs" style="left:1675px;top:17px;height:24px;line-height:24px;color:#e6e6e8;font-size:17px;letter-spacing:0.2px;">Williams J.</div>
<div class="abs" style="left:1835px;top:15px;height:26px;line-height:26px;color:#fff;font-weight:bold;font-size:23px;transform:scaleX(0.88);transform-origin:0 50%;-webkit-text-stroke:0.6px #fff;">BOSCH</div>

<div class="abs" style="left:112px;top:126px;height:24px;line-height:24px;color:#fff;font-weight:bold;font-size:20px;letter-spacing:0.64px;">AUDIO CONFIGURATION</div>
<svg class="abs" style="left:377px;top:131px" width="14" height="14" viewBox="0 0 14 14"><circle cx="7" cy="7" r="5.6" fill="none" stroke="#c8c8ca" stroke-width="1"/><text x="7" y="10.2" text-anchor="middle" font-family="Liberation Sans" font-size="8.5" fill="#c8c8ca">?</text></svg>

<div class="abs" style="left:1310px;top:1036px;height:18px;line-height:18px;color:#e6e6e8;font-size:14px;letter-spacing:0.64px;white-space:nowrap;">&copy; Bosch Security Systems B.V. 2024, all rights reserved.</div>
<div class="abs" style="left:1715px;top:1036px;height:18px;line-height:18px;color:#e6e6e8;font-size:14px;letter-spacing:0.55px;white-space:nowrap;">Version 1.0</div>
<div class="abs" style="left:1809px;top:1036px;height:18px;line-height:18px;color:#e6e6e8;font-size:14px;letter-spacing:0.57px;white-space:nowrap;">Legal Notice</div>
<div class="abs" style="left:1808px;top:1053px;width:86px;height:1px;background:repeating-linear-gradient(90deg,#b8b8ba 0,#b8b8ba 2.5px,transparent 2.5px,transparent 3.85px);"></div>

<div class="abs" style="left:4px;top:116px;width:48px;height:48px;background:#0b91e2"></div>
<svg class="abs" style="left:14px;top:77px" width="28" height="28" viewBox="0 0 28 28">
 <rect x="4.6" y="7.5" width="19" height="12.5" stroke="#fff" fill="none" stroke-width="1.3"/>
 <path d="M6.3 9.8H14" stroke="#fff" fill="none" stroke-width="1.2"/>
 <circle cx="19.6" cy="9.8" r="0.7" fill="#fff"/><circle cx="21.7" cy="9.8" r="0.7" fill="#fff"/>
 <rect x="6" y="12" width="16" height="5" fill="#9a9a9c"/>
 <rect x="6.6" y="12.6" width="3.8" height="3.8" stroke="#fff" fill="none" stroke-width="1.1"/>
 <rect x="12.1" y="12.6" width="3.8" height="3.8" stroke="#fff" fill="none" stroke-width="1.1"/>
 <rect x="17.6" y="12.6" width="3.8" height="3.8" stroke="#fff" fill="none" stroke-width="1.1"/>
 <path d="M13.4 20.3V22.5M14.6 20.3V22.5" stroke="#fff" fill="none" stroke-width="0.9"/>
 <path d="M10.5 22.6H17.5" stroke="#fff" fill="none" stroke-width="1.2"/>
</svg>
<svg class="abs" style="left:14px;top:126px" width="28" height="28" viewBox="0 0 28 28">
 <rect x="7.2" y="6" width="1.7" height="10.5" fill="#0f3a58"/>
 <rect x="5.2" y="18" width="5" height="1.1" fill="#051722"/>
 <rect x="7.2" y="20.4" width="1.7" height="1.7" fill="#0f3a58"/>
 <rect x="13.1" y="6" width="1.8" height="5.6" fill="#0f3a58"/>
 <rect x="11.4" y="13.5" width="5.2" height="1.4" fill="#0b2e47"/>
 <rect x="13.1" y="16" width="1.8" height="6.1" fill="#0f3a58"/>
 <rect x="19.1" y="6" width="1.8" height="1.8" fill="#0f3a58"/>
 <rect x="17.6" y="9.1" width="5" height="1.1" fill="#051722"/>
 <rect x="19.1" y="11.1" width="1.8" height="11" fill="#0f3a58"/>
</svg>
<svg class="abs" style="left:14px;top:174px" width="28" height="28" viewBox="0 0 28 28">
 <circle cx="14" cy="21" r="1.6" fill="#fff"/>
 <path d="M10.2 17Q14 14 17.8 17" stroke="#fff" fill="none" stroke-width="1.3" stroke-linecap="round"/>
 <path d="M7.2 14.5Q14 8.5 20.8 14.5" stroke="#fff" fill="none" stroke-width="1.3" stroke-linecap="round"/>
 <path d="M4.2 11.6Q14 3.5 23.8 11.6" stroke="#fff" fill="none" stroke-width="1.3" stroke-linecap="round"/>
</svg>
<svg class="abs" style="left:14px;top:222px" width="28" height="28" viewBox="0 0 28 28">
 <rect x="11.4" y="4.6" width="5.2" height="4.6" stroke="#fff" fill="none" stroke-width="1.2"/>
 <path d="M14 9.6V18" stroke="#b0b0b2" stroke-width="1.4" fill="none"/>
 <path d="M6.4 18.2V14H21.6V18.2" stroke="#fff" fill="none" stroke-width="1.2"/>
 <path d="M7 14H21" stroke="#b0b0b2" stroke-width="1.4" fill="none"/>
 <rect x="4.4" y="19.4" width="4.6" height="4.6" stroke="#fff" fill="none" stroke-width="1.2"/>
 <rect x="11.4" y="19.4" width="5.2" height="4.6" stroke="#fff" fill="none" stroke-width="1.2"/>
 <rect x="19.2" y="19.4" width="4.6" height="4.6" stroke="#fff" fill="none" stroke-width="1.2"/>
</svg>
<svg class="abs" style="left:14px;top:270px" width="28" height="28" viewBox="0 0 28 28">
 <path d="M20.81 11.36L23.21 12.13L23.21 15.87L20.81 16.64A7.3 7.3 0 0 1 20.68 16.95L21.83 19.19L19.19 21.83L16.95 20.68A7.3 7.3 0 0 1 16.64 20.81L15.87 23.21L12.13 23.21L11.36 20.81A7.3 7.3 0 0 1 11.05 20.68L8.81 21.83L6.17 19.19L7.32 16.95A7.3 7.3 0 0 1 7.19 16.64L4.79 15.87L4.79 12.13L7.19 11.36A7.3 7.3 0 0 1 7.32 11.05L6.17 8.81L8.81 6.17L11.05 7.32A7.3 7.3 0 0 1 11.36 7.19L12.13 4.79L15.87 4.79L16.64 7.19A7.3 7.3 0 0 1 16.95 7.32L19.19 6.17L21.83 8.81L20.68 11.05A7.3 7.3 0 0 1 20.81 11.36Z" stroke="#fff" fill="none" stroke-width="1.2" stroke-linejoin="round"/>
 <circle cx="14" cy="14" r="3.6" stroke="#fff" fill="none" stroke-width="1.2"/>
</svg>
<svg class="abs" style="left:14px;top:318px" width="28" height="28" viewBox="0 0 28 28">
 <circle cx="14" cy="11.4" r="6.6" stroke="#fff" fill="none" stroke-width="1.2" stroke-dasharray="3.2 0.6"/>
 <path d="M10.3 12.3L12.5 14.6L17.5 9.3" stroke="#fff" fill="none" stroke-width="1.1"/>
 <path d="M10.6 16.8L8 23.2L11 22.2L12.3 24.2L14.2 18M17.4 16.8L20 23.2L17 22.2L15.7 24.2L13.8 18" stroke="#fff" fill="none" stroke-width="1.1" stroke-linejoin="round"/>
</svg>
<svg class="abs" style="left:14px;top:366px" width="28" height="28" viewBox="0 0 28 28">
 <rect x="4.7" y="7.9" width="18.8" height="12.3" stroke="#fff" fill="none" stroke-width="1.4"/>
 <circle cx="9.6" cy="13.2" r="2.2" stroke="#fff" fill="none" stroke-width="1.2"/>
 <path d="M6.3 20Q9.6 15.3 12.9 20" stroke="#fff" fill="none" stroke-width="1.2"/>
 <path d="M14 11.5H22M14 16.5H20" stroke="#fff" fill="none" stroke-width="1.1"/>
 <path d="M14 14H22" stroke="#a8a8aa" stroke-width="1.1"/>
</svg>

<svg class="abs" style="left:1484px;top:14px" width="28" height="28" viewBox="0 0 28 28">
 <rect x="4.6" y="6.4" width="19.4" height="14.2" stroke="#fff" fill="none" stroke-width="1.2"/>
 <path d="M14 6V22" stroke="#a4a4a6" stroke-width="1.6"/>
 <rect x="18.1" y="9" width="2" height="1.2" fill="#b0b0b2"/>
 <rect x="18.1" y="12" width="2" height="6" fill="#a4a4a6"/>
</svg>
<svg class="abs" style="left:1532px;top:14px" width="28" height="28" viewBox="0 0 28 28">
 <path d="M23.5 13.8A9.5 9.5 0 1 0 17.2 22.8" stroke="#fff" fill="none" stroke-width="1.15"/>
 <path d="M14 4.3A5 9.5 0 0 0 14 23.3M14 4.3A5 9.5 0 0 1 19 12.5" stroke="#fff" fill="none" stroke-width="1.1"/>
 <path d="M13.6 4.6V12.6Q13.6 13.8 12.4 13.8H4.6" stroke="#a4a4a6" stroke-width="1.3" fill="none"/>
 <path d="M15 14.8H23.8V21.6L22.6 21.7L23.5 23.5L20.9 21.7H15Z" stroke="#fff" fill="none" stroke-width="1.1"/>
 <path d="M15 14.8V21.6" stroke="#a4a4a6" stroke-width="1.3"/>
 <path d="M17.8 20L19.3 17L20.7 20" stroke="#b8b8ba" stroke-width="1" fill="none"/>
</svg>
<svg class="abs" style="left:1580px;top:14px" width="28" height="28" viewBox="0 0 28 28">
 <path d="M4.3 23.5L23.8 4.3" stroke="#fff" fill="none" stroke-width="1.1"/>
 <circle cx="9.4" cy="9.4" r="1.9" stroke="#fff" fill="none" stroke-width="1.1"/>
 <path d="M9.4 4V5.7M9.4 13.1V14.8M4 9.4H5.7M13.1 9.4H14.8M5.3 5.3L6.8 6.8M13.5 5.3L12 6.8M5.3 13.5L6.8 12M12 12L12.6 12.6" stroke="#fff" fill="none" stroke-width="1.1"/>
 <path d="M19.1 13.5A4.9 4.9 0 1 0 23.4 20.9A4.2 4.2 0 0 1 19.1 13.5Z" stroke="#fff" fill="none" stroke-width="1.05"/>
</svg>
<svg class="abs" style="left:1628px;top:14px" width="28" height="28" viewBox="0 0 28 28">
 <circle cx="14" cy="14" r="9.5" stroke="#fff" fill="none" stroke-width="1.2"/>
 <circle cx="14" cy="13.2" r="3.4" stroke="#fff" fill="none" stroke-width="1.2"/>
 <path d="M9.2 21.8Q9.4 17.1 14 17.1Q18.6 17.1 18.8 21.8" stroke="#fff" fill="none" stroke-width="1.2"/>
</svg>
<svg class="abs" style="left:1798px;top:14px" width="28" height="28" viewBox="0 0 28 28">
 <circle cx="14" cy="13.8" r="11.2" stroke="#fff" fill="none" stroke-width="1.3"/>
 <path d="M9.6 6.2Q0.8 13.8 9.6 21.4ZM18.5 6.2Q27.3 13.8 18.5 21.4Z" stroke="#fff" fill="none" stroke-width="1.2"/>
 <path d="M9.6 11.2H18.5M9.6 16.6H18.5" stroke="#fff" fill="none" stroke-width="1.2"/>
</svg>
</div>
</body></html>
